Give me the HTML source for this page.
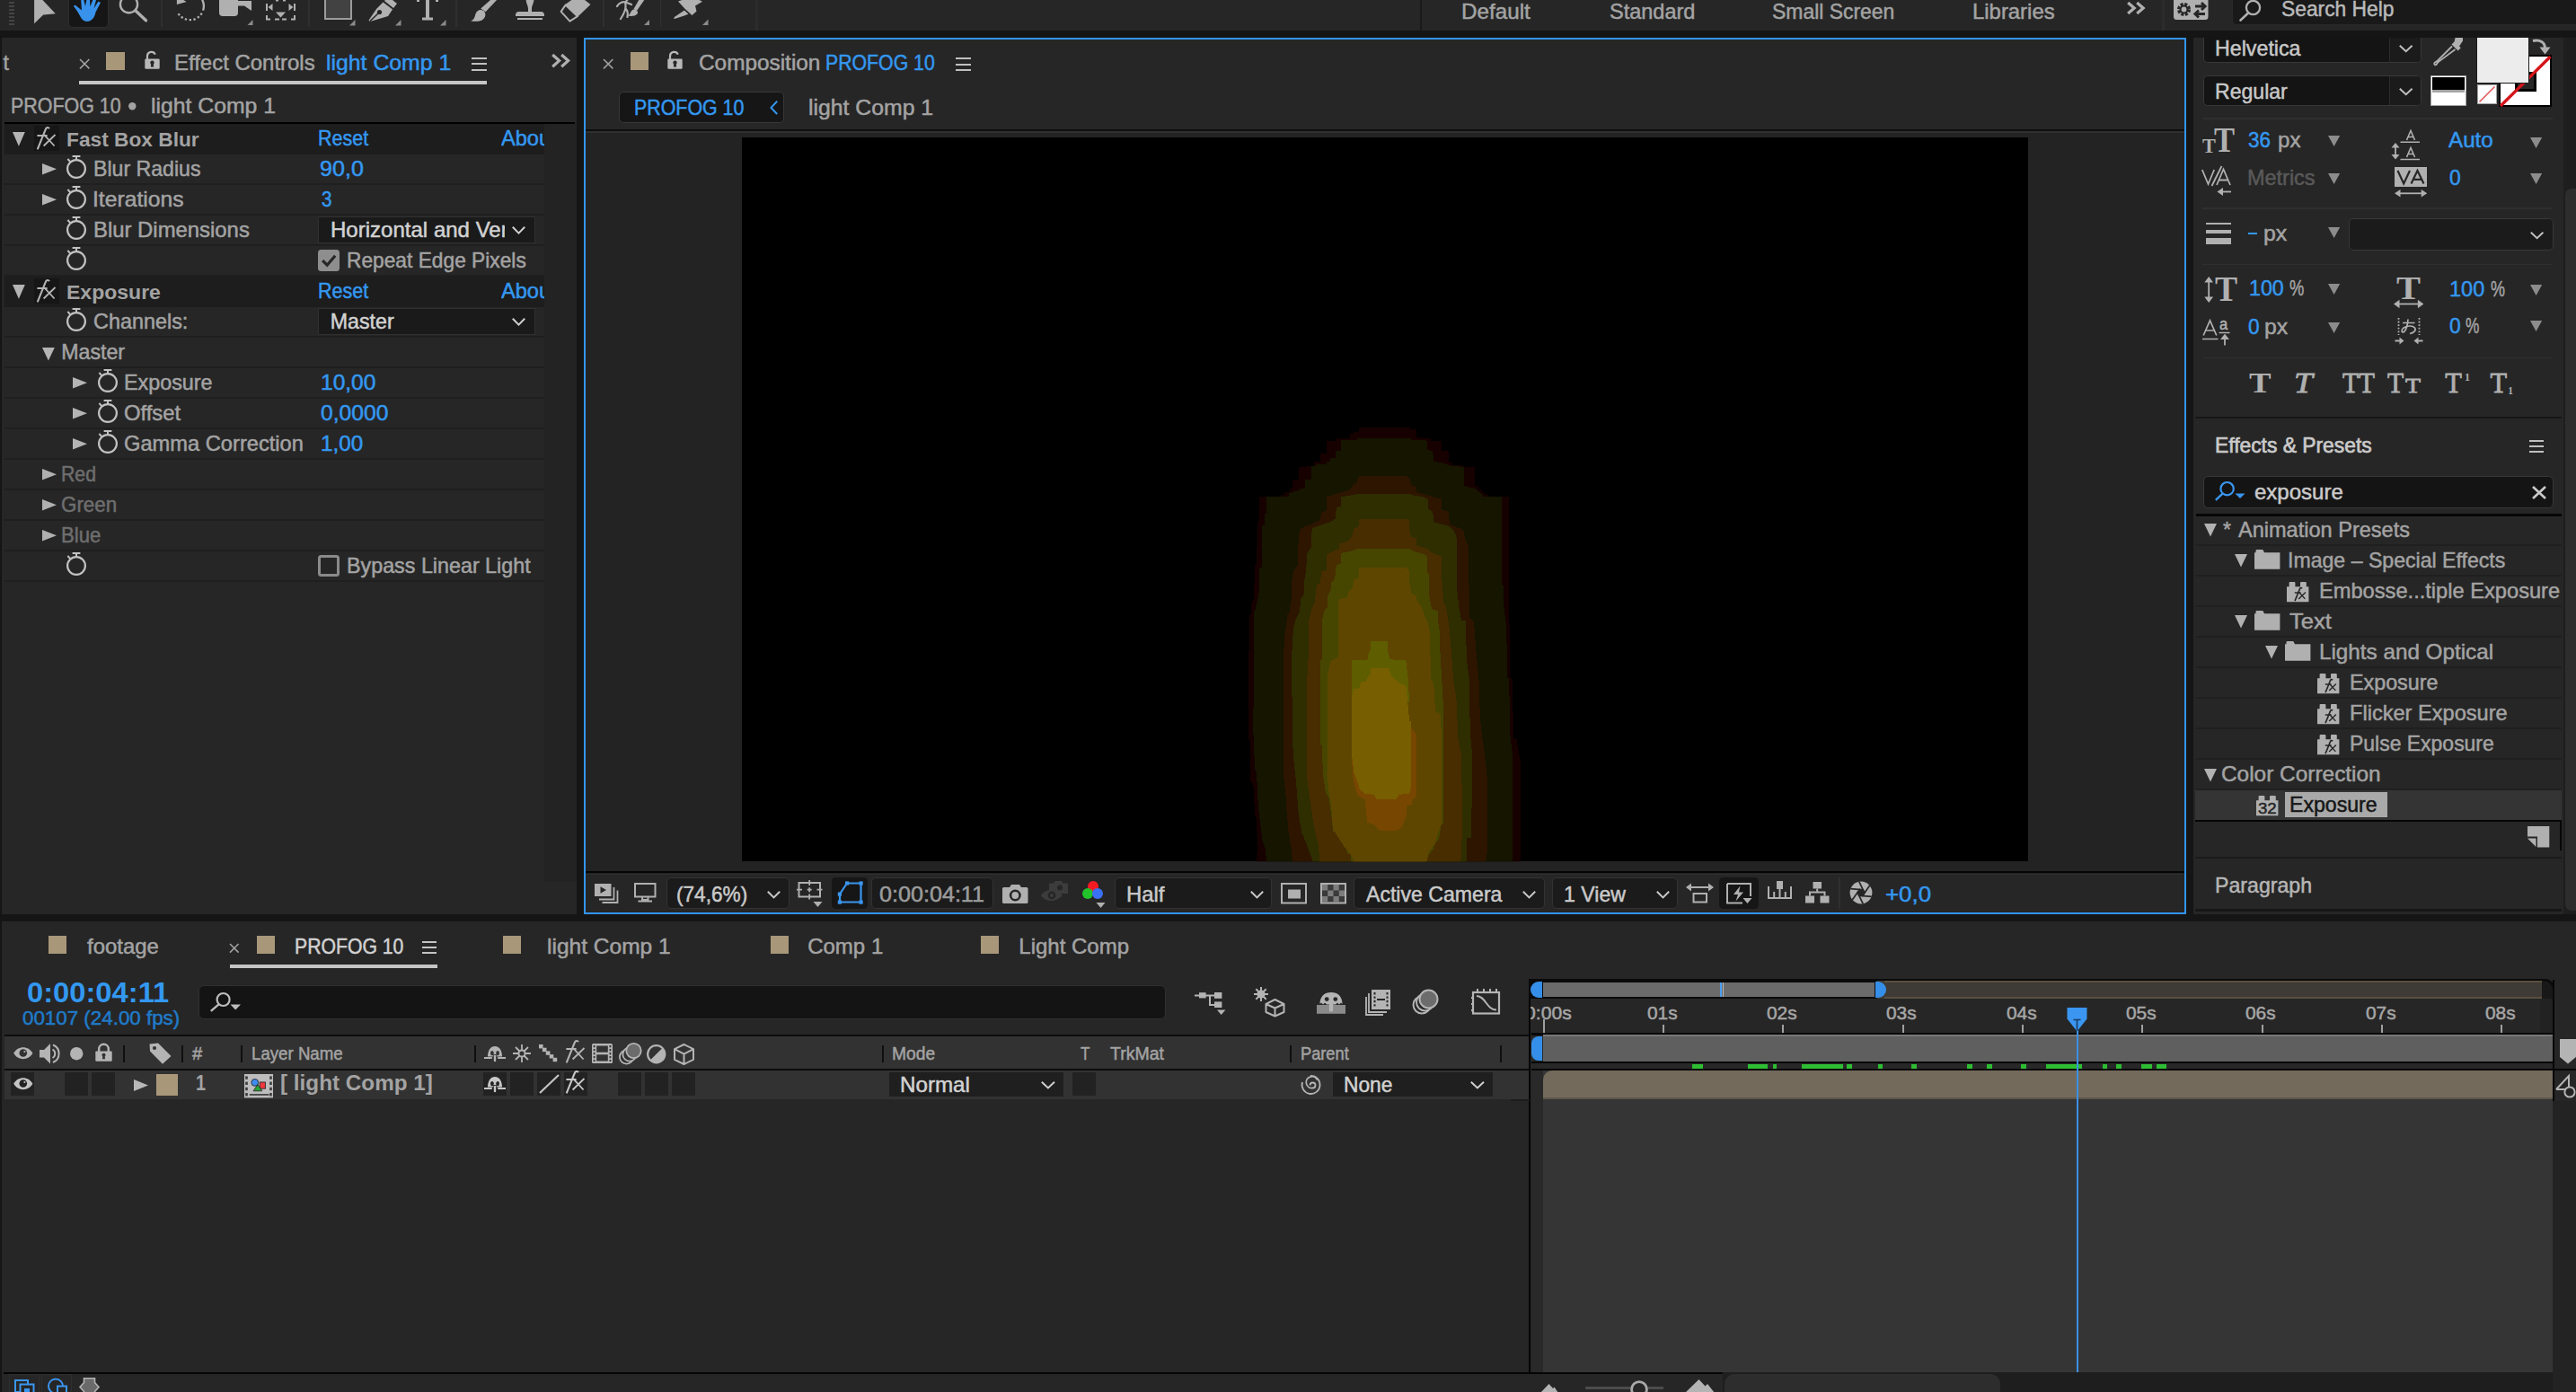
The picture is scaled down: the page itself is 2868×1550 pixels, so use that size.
<!DOCTYPE html>
<html><head><meta charset="utf-8"><title>After Effects</title>
<style>
html,body{margin:0;padding:0;background:#151515;}
body{width:2868px;height:1550px;position:relative;overflow:hidden;font-family:"Liberation Sans", sans-serif;}
div,svg,span.t{position:absolute;}
span.t{white-space:pre;transform-origin:0 0;}
div.c{overflow:hidden;}
svg{overflow:visible;}
</style></head><body>
<div style="left:0.00px;top:0.00px;width:2868.00px;height:34.00px;background:#262626;"></div>
<div style="left:10.00px;top:2.00px;width:6.00px;height:2.00px;background:#444444;"></div>
<div style="left:10.00px;top:6.00px;width:6.00px;height:2.00px;background:#444444;"></div>
<div style="left:10.00px;top:10.00px;width:6.00px;height:2.00px;background:#444444;"></div>
<div style="left:10.00px;top:14.00px;width:6.00px;height:2.00px;background:#444444;"></div>
<div style="left:10.00px;top:18.00px;width:6.00px;height:2.00px;background:#444444;"></div>
<div style="left:10.00px;top:22.00px;width:6.00px;height:2.00px;background:#444444;"></div>
<div style="left:10.00px;top:26.00px;width:6.00px;height:2.00px;background:#444444;"></div>
<svg style="left:37.00px;top:0.00px" width="26" height="27" viewBox="0 0 26 27"><path d="M1.1 -1V26.2L11.2 16.4L24.8 15.2L9.5 -1Z" fill="#b0b0b0"/></svg>
<div style="left:75.50px;top:-6.00px;width:45.00px;height:36.50px;background:#161616;border-radius:5px;border:1px solid #2e2e2e;box-sizing:border-box;"></div>
<svg style="left:81.00px;top:0.00px" width="33" height="25" viewBox="0 0 33 25"><path d="M1.5 7.5C0.5 6.5 1.8 5 3.2 6L10 11.5L9.2 0H12.3L14 7L15.3 0H19L19.4 7.2L22.3 0H26L23.5 9.5L28.5 1.5L31 3L25.5 13.5C24.5 18.5 22.5 22.5 17.5 23.8C13 24.6 10.3 22 8.5 18.5C6.5 14.5 3.5 10 1.5 7.5Z" fill="#3892ec"/></svg>
<svg style="left:130.00px;top:0.00px" width="36" height="26" viewBox="0 0 36 26"><circle cx="13.5" cy="4.7" r="9.6" fill="none" stroke="#b0b0b0" stroke-width="2.4"/><path d="M20.8 11.8L32.5 22.8" stroke="#b0b0b0" stroke-width="3.4" stroke-linecap="round"/></svg>
<div style="left:179.30px;top:0.00px;width:1.50px;height:30.00px;background:#2f2f2f;"></div>
<svg style="left:196.00px;top:0.00px" width="34" height="26" viewBox="0 0 34 26"><path d="M22.7 -6.8A15.4 15.4 0 0 1 30.1 11.6" fill="none" stroke="#b0b0b0" stroke-width="2.3"/><rect x="27.0" y="14.5" width="2.3" height="2.3" fill="#b0b0b0" transform="rotate(35 28.1 15.6)"/><rect x="23.6" y="17.9" width="2.3" height="2.3" fill="#b0b0b0" transform="rotate(53 24.8 19.1)"/><rect x="19.4" y="20.2" width="2.3" height="2.3" fill="#b0b0b0" transform="rotate(71 20.5 21.4)"/><rect x="14.6" y="21.0" width="2.3" height="2.3" fill="#b0b0b0" transform="rotate(89 15.8 22.2)"/><rect x="9.8" y="20.4" width="2.3" height="2.3" fill="#b0b0b0" transform="rotate(107 11.0 21.5)"/><rect x="5.5" y="18.3" width="2.3" height="2.3" fill="#b0b0b0" transform="rotate(125 6.7 19.4)"/><rect x="2.1" y="14.9" width="2.3" height="2.3" fill="#b0b0b0" transform="rotate(143 3.2 16.1)"/><path d="M0.9 -4L11.7 1.9L0.9 5Z" fill="#b0b0b0"/></svg>
<svg style="left:244.00px;top:0.00px" width="38" height="29" viewBox="0 0 38 29"><path d="M0 0H21V14A4 4 0 0 1 17 18H4A4 4 0 0 1 0 14Z" fill="#b0b0b0"/><path d="M21 1H36V12L28 6.5H21Z" fill="#b0b0b0"/><path d="M31.5 28H37.5V22Z" fill="#8a8a8a"/></svg>
<svg style="left:296.00px;top:0.00px" width="33" height="23" viewBox="0 0 33 23"><path d="M1 4V12M32 4V12" stroke="#b0b0b0" stroke-width="2"/><path d="M1 17V21.5H5M10 21.5H15M18 21.5H23M28 21.5H32V17" stroke="#b0b0b0" stroke-width="2" fill="none"/><path d="M11 0H14M19 0H22" stroke="#b0b0b0" stroke-width="3"/><path d="M2.5 8L7.5 4V12ZM30.5 8L25.5 4V12ZM16.5 19.5L11 13.5H22Z" fill="#b0b0b0"/></svg>
<div style="left:343.30px;top:0.00px;width:1.50px;height:30.00px;background:#2f2f2f;"></div>
<div style="left:360.50px;top:-4.00px;width:31.00px;height:25.50px;background:#424242;border:2px solid #9c9c9c;box-sizing:border-box;"></div>
<svg style="left:388.50px;top:21.50px" width="7" height="7" viewBox="0 0 7 7"><path d="M0 6.5H6.5V0Z" fill="#8a8a8a"/></svg>
<svg style="left:410.00px;top:0.00px" width="33" height="25" viewBox="0 0 33 25"><path d="M22 -4L32 4L28 9L18 1Z" fill="#b0b0b0"/><path d="M16.5 2.5L27 10.5L22 18L2 24L0.5 22.5L9.5 9.5Z" fill="#b0b0b0"/><circle cx="12.5" cy="13.5" r="2.6" fill="#262626"/><path d="M11.5 14.5L2 23.5" stroke="#262626" stroke-width="1.6"/></svg>
<svg style="left:439.50px;top:21.50px" width="7" height="7" viewBox="0 0 7 7"><path d="M0 6.5H6.5V0Z" fill="#8a8a8a"/></svg>
<svg style="left:464.00px;top:0.00px" width="26" height="23" viewBox="0 0 26 23"><path d="M0 -4H24V2H21V-1H14V19.5H18V22.5H6V19.5H10V-1H3V2H0Z" fill="#b0b0b0"/></svg>
<svg style="left:489.50px;top:21.50px" width="7" height="7" viewBox="0 0 7 7"><path d="M0 6.5H6.5V0Z" fill="#8a8a8a"/></svg>
<div style="left:507.30px;top:0.00px;width:1.50px;height:30.00px;background:#2f2f2f;"></div>
<svg style="left:523.00px;top:0.00px" width="32" height="25" viewBox="0 0 32 25"><path d="M24.2 -1H31L17.6 13.2L12.2 9.6Z" fill="#b0b0b0"/><path d="M1 23.2C5 22.3 5.4 19 6.5 15.5C8 11.3 12 9.8 15.2 12C18.6 14.6 18 19.6 14 22.2C10 24.4 5 24 1 23.2Z" fill="#b0b0b0"/></svg>
<svg style="left:574.00px;top:0.00px" width="32" height="23" viewBox="0 0 32 23"><path d="M11.5 -2C11.5 4 14 6 14 10V13H3.5C1.5 13 0 14.5 0 16.5V18H32V16.5C32 14.5 30.5 13 28.5 13H18V10C18 6 20.5 4 20.5 -2Z" fill="#b0b0b0"/><rect x="2" y="20" width="28" height="2" fill="#b0b0b0"/></svg>
<svg style="left:623.00px;top:0.00px" width="36" height="25" viewBox="0 0 36 25"><path d="M6.3 5.1L21 -5.6L34.5 5.1L20.4 18.6Z" fill="#b0b0b0"/><path d="M6.6 5.6L20 18.2L11.4 23.6L1.6 12.9Z" fill="none" stroke="#b0b0b0" stroke-width="2" stroke-linejoin="round"/></svg>
<div style="left:671.30px;top:0.00px;width:1.50px;height:30.00px;background:#2f2f2f;"></div>
<svg style="left:685.00px;top:0.00px" width="40" height="29" viewBox="0 0 40 29"><path d="M2 7C4 3 9 1 13 3L18 5M11 3C13 9 10 15 6 21M12 10C14 12 14 16 13.5 19M11.5 2.5C13 0 15 -2 16 -3" stroke="#b0b0b0" stroke-width="2.2" fill="none" stroke-linecap="round"/><path d="M28 -3L33 -1L24 12L20.5 10Z" fill="#b0b0b0"/><path d="M20 10.5C23 10 26.5 13 24.5 15.5C22.5 18 17.5 18.5 14 17.5C17 16 17 12 20 10.5Z" fill="#b0b0b0"/><path d="M32 28H38V22Z" fill="#8a8a8a"/></svg>
<div style="left:734.80px;top:0.00px;width:1.50px;height:30.00px;background:#2f2f2f;"></div>
<svg style="left:749.00px;top:0.00px" width="40" height="29" viewBox="0 0 40 29"><path d="M6 1.5L22 -4L33 1.8L25 6.5L26.5 12.5L21.5 17L13.5 9.8Z" fill="#b0b0b0"/><path d="M13 11.5L17.5 15.8L3.5 20.5L1.2 21L1.8 19Z" fill="#b0b0b0"/><path d="M33 28H39.5V21.5Z" fill="#8a8a8a"/></svg>
<div style="left:840.50px;top:0.00px;width:3.50px;height:34.00px;background:#2c2c2c;"></div>
<div style="left:1581.00px;top:0.00px;width:1.50px;height:34.00px;background:#1a1a1a;"></div>
<span class="t" style="left:1627.01px;top:0.63px;font-size:24.3px;line-height:24.3px;color:#a3a3a3;-webkit-text-stroke:0.5px #a3a3a3;transform:scaleX(0.9969);">Default</span>
<span class="t" style="left:1791.53px;top:0.63px;font-size:24.3px;line-height:24.3px;color:#a3a3a3;-webkit-text-stroke:0.5px #a3a3a3;transform:scaleX(0.9678);">Standard</span>
<span class="t" style="left:1973.06px;top:0.63px;font-size:24.3px;line-height:24.3px;color:#a3a3a3;-webkit-text-stroke:0.5px #a3a3a3;transform:scaleX(0.9438);">Small Screen</span>
<span class="t" style="left:2195.53px;top:0.63px;font-size:24.3px;line-height:24.3px;color:#a3a3a3;-webkit-text-stroke:0.5px #a3a3a3;transform:scaleX(0.9832);">Libraries</span>
<svg style="left:2368.00px;top:1.50px" width="21" height="14" viewBox="0 0 21 14"><path d="M1.2 1L8.2 7L1.2 13M11.2 1L18.2 7L11.2 13" fill="none" stroke="#b0b0b0" stroke-width="3.2"/></svg>
<div style="left:2406.50px;top:0.00px;width:3.50px;height:34.00px;background:#2c2c2c;"></div>
<svg style="left:2419.80px;top:0.00px" width="39" height="22.5" viewBox="0 0 39 22.5"><path d="M0 0H38.5V18.5A3.5 3.5 0 0 1 35 22H3.5A3.5 3.5 0 0 1 0 18.5Z" fill="#b0b0b0"/><circle cx="11.5" cy="10.5" r="5.6" fill="none" stroke="#262626" stroke-width="3.8" stroke-dasharray="2.9 1.5"/><circle cx="11.5" cy="10.5" r="4" fill="none" stroke="#262626" stroke-width="2.2"/><path d="M24 7H35M31 3L35.2 7L31 11M35 15.5H24M28 11.5L23.8 15.5L28 19.5" fill="none" stroke="#262626" stroke-width="2.8"/></svg>
<div style="left:2484.50px;top:-6.00px;width:400.00px;height:33.50px;background:#191919;border-radius:5px;border:1px solid #2a2a2a;box-sizing:border-box;"></div>
<svg style="left:2493.00px;top:0.00px" width="26" height="24" viewBox="0 0 26 24"><circle cx="15.5" cy="8.5" r="7.6" fill="none" stroke="#b0b0b0" stroke-width="2.3"/><path d="M10 14.5L1.5 22.5" stroke="#b0b0b0" stroke-width="2.6" stroke-linecap="round"/></svg>
<span class="t" style="left:2540.06px;top:-1.77px;font-size:24.3px;line-height:24.3px;color:#b9b9b9;-webkit-text-stroke:0.5px #b9b9b9;transform:scaleX(0.9380);">Search Help</span>
<div style="left:2.00px;top:42.00px;width:640.00px;height:976.00px;background:#262626;"></div>
<span class="t" style="left:3.60px;top:58.96px;font-size:23.2px;line-height:23.2px;color:#a3a3a3;-webkit-text-stroke:0.5px #a3a3a3;">t</span>
<svg style="left:88.80px;top:65.80px" width="10.4" height="10.4" viewBox="0 0 10.4 10.4"><path d="M0 0L10.4 10.4M10.4 0L0 10.4" stroke="#a0a0a0" stroke-width="1.6"/></svg>
<div style="left:118.00px;top:58.00px;width:21.00px;height:20.00px;background:#a9977a;"></div>
<svg style="left:160.50px;top:55.50px" width="18" height="21" viewBox="0 0 18 21"><path d="M3 10V6.2A4.6 4.6 0 0 1 11.8 4.6" fill="none" stroke="#b8b8b8" stroke-width="2.2"/><rect x="0.3" y="9.5" width="16.4" height="11.2" rx="1.2" fill="#b8b8b8"/><circle cx="8.5" cy="13.8" r="2.2" fill="#262626"/><path d="M7.4 14.5h2.2l0.6 4h-3.4z" fill="#262626"/></svg>
<span class="t" style="left:194.47px;top:58.86px;font-size:23.2px;line-height:23.2px;color:#a3a3a3;-webkit-text-stroke:0.5px #a3a3a3;transform:scaleX(1.0330);">Effect Controls</span>
<span class="t" style="left:363.23px;top:58.86px;font-size:23.2px;line-height:23.2px;color:#3498f1;-webkit-text-stroke:0.5px #3498f1;transform:scaleX(1.0696);">light Comp 1</span>
<div style="left:525.00px;top:64.20px;width:16.50px;height:2.00px;background:#c0c0c0;"></div>
<div style="left:525.00px;top:70.45px;width:16.50px;height:2.00px;background:#c0c0c0;"></div>
<div style="left:525.00px;top:76.70px;width:16.50px;height:2.00px;background:#c0c0c0;"></div>
<svg style="left:614.00px;top:60.40px" width="21" height="16" viewBox="0 0 21 16"><path d="M1.2 1L8.6 7.6L1.2 14.2M11.2 1L18.6 7.6L11.2 14.2" fill="none" stroke="#b0b0b0" stroke-width="3.2"/></svg>
<div style="left:88.00px;top:90.00px;width:454.30px;height:4.20px;background:#c6c6c6;"></div>
<span class="t" style="left:12.08px;top:106.76px;font-size:23.2px;line-height:23.2px;color:#a3a3a3;-webkit-text-stroke:0.5px #a3a3a3;transform:scaleX(0.9242);">PROFOG 10</span>
<svg style="left:143.40px;top:113.60px" width="8.6" height="8.6" viewBox="0 0 8.6 8.6"><circle cx="4.3" cy="4.3" r="4.2" fill="#a3a3a3"/></svg>
<span class="t" style="left:167.53px;top:106.76px;font-size:23.2px;line-height:23.2px;color:#a3a3a3;-webkit-text-stroke:0.5px #a3a3a3;transform:scaleX(1.0673);">light Comp 1</span>
<div style="left:5.00px;top:135.50px;width:635.00px;height:2.20px;background:#000;"></div>
<div style="left:5.00px;top:138.00px;width:601.00px;height:34.01px;background:#1d1d1d;"></div>
<div style="left:5.00px;top:203.82px;width:601.00px;height:2.20px;background:#1f1f1f;"></div>
<div style="left:5.00px;top:237.83px;width:601.00px;height:2.20px;background:#1f1f1f;"></div>
<div style="left:5.00px;top:271.84px;width:601.00px;height:2.20px;background:#1f1f1f;"></div>
<div style="left:5.00px;top:305.85px;width:601.00px;height:2.20px;background:#1f1f1f;"></div>
<div style="left:5.00px;top:308.05px;width:601.00px;height:34.01px;background:#1d1d1d;"></div>
<div style="left:5.00px;top:373.87px;width:601.00px;height:2.20px;background:#1f1f1f;"></div>
<div style="left:5.00px;top:407.88px;width:601.00px;height:2.20px;background:#1f1f1f;"></div>
<div style="left:5.00px;top:441.89px;width:601.00px;height:2.20px;background:#1f1f1f;"></div>
<div style="left:5.00px;top:475.90px;width:601.00px;height:2.20px;background:#1f1f1f;"></div>
<div style="left:5.00px;top:509.91px;width:601.00px;height:2.20px;background:#1f1f1f;"></div>
<div style="left:5.00px;top:543.92px;width:601.00px;height:2.20px;background:#1f1f1f;"></div>
<div style="left:5.00px;top:577.93px;width:601.00px;height:2.20px;background:#1f1f1f;"></div>
<div style="left:5.00px;top:611.94px;width:601.00px;height:2.20px;background:#1f1f1f;"></div>
<div style="left:5.00px;top:645.95px;width:601.00px;height:2.20px;background:#1f1f1f;"></div>
<div style="left:5.00px;top:645.95px;width:601.00px;height:2.20px;background:#1f1f1f;"></div>
<div style="left:606.00px;top:138.00px;width:36.00px;height:844.00px;background:#232323;"></div>
<svg style="left:13.60px;top:147.00px" width="13.8" height="15.8" viewBox="0 0 13.8 15.8"><path d="M0 0H13.8L6.9 15.8Z" fill="#b4b4b4"/></svg>
<div style="left:38.00px;top:140.20px;width:28.00px;height:27.40px;background:#161616;"></div>
<svg style="left:40.00px;top:140.70px" width="24.0" height="26.0" viewBox="0 0 24 26"><path d="M15 2.2C13.8 0.5 11.6 0.5 10.7 3.2L1.7 25.3M1.4 10H12.6" fill="none" stroke="#b4b4b4" stroke-width="2.1"/><path d="M9.4 9.3L20.6 21.5M21.5 9L8.6 21.5" fill="none" stroke="#b4b4b4" stroke-width="1.81"/></svg>
<span class="t" style="left:74.00px;top:143.60px;font-size:22.8px;line-height:22.8px;color:#a3a3a3;font-weight:bold;transform:scaleX(0.9964);">Fast Box Blur</span>
<span class="t" style="left:354.27px;top:143.26px;font-size:23.2px;line-height:23.2px;color:#3498f1;-webkit-text-stroke:0.5px #3498f1;transform:scaleX(0.9280);">Reset</span>
<div class="c" style="left:557.80px;top:139.26px;width:48.20px;height:31.2px"><span class="t" style="left:0;top:4px;font-size:23.2px;line-height:23.2px;color:#3498f1;-webkit-text-stroke:0.5px #3498f1;transform:scaleX(1.0171);">About</span></div>
<svg style="left:13.60px;top:317.05px" width="13.8" height="15.8" viewBox="0 0 13.8 15.8"><path d="M0 0H13.8L6.9 15.8Z" fill="#b4b4b4"/></svg>
<div style="left:38.00px;top:310.25px;width:28.00px;height:27.40px;background:#161616;"></div>
<svg style="left:40.00px;top:310.75px" width="24.0" height="26.0" viewBox="0 0 24 26"><path d="M15 2.2C13.8 0.5 11.6 0.5 10.7 3.2L1.7 25.3M1.4 10H12.6" fill="none" stroke="#b4b4b4" stroke-width="2.1"/><path d="M9.4 9.3L20.6 21.5M21.5 9L8.6 21.5" fill="none" stroke="#b4b4b4" stroke-width="1.81"/></svg>
<span class="t" style="left:73.99px;top:313.65px;font-size:22.8px;line-height:22.8px;color:#a3a3a3;font-weight:bold;transform:scaleX(1.0097);">Exposure</span>
<span class="t" style="left:354.27px;top:313.31px;font-size:23.2px;line-height:23.2px;color:#3498f1;-webkit-text-stroke:0.5px #3498f1;transform:scaleX(0.9280);">Reset</span>
<div class="c" style="left:557.80px;top:309.31px;width:48.20px;height:31.2px"><span class="t" style="left:0;top:4px;font-size:23.2px;line-height:23.2px;color:#3498f1;-webkit-text-stroke:0.5px #3498f1;transform:scaleX(1.0171);">About</span></div>
<svg style="left:46.70px;top:181.91px" width="16" height="12.6" viewBox="0 0 16 12.6"><path d="M0 0L16 6.3L0 12.6Z" fill="#b4b4b4"/></svg>
<svg style="left:72.00px;top:172.21px" width="26" height="28" viewBox="0 0 26 28"><circle cx="13" cy="16" r="9.9" fill="none" stroke="#c2c2c2" stroke-width="2.2"/><path d="M8.6 2.1H17.4M13 2.1V6.2M3.4 5L6.4 8.4" stroke="#c2c2c2" stroke-width="2" fill="none"/></svg>
<span class="t" style="left:103.80px;top:177.27px;font-size:23.2px;line-height:23.2px;color:#a3a3a3;-webkit-text-stroke:0.5px #a3a3a3;transform:scaleX(0.9969);">Blur Radius</span>
<span class="t" style="left:355.72px;top:177.27px;font-size:23.2px;line-height:23.2px;color:#3498f1;-webkit-text-stroke:0.5px #3498f1;transform:scaleX(1.0825);">90,0</span>
<svg style="left:46.70px;top:215.92px" width="16" height="12.6" viewBox="0 0 16 12.6"><path d="M0 0L16 6.3L0 12.6Z" fill="#b4b4b4"/></svg>
<svg style="left:72.00px;top:206.22px" width="26" height="28" viewBox="0 0 26 28"><circle cx="13" cy="16" r="9.9" fill="none" stroke="#c2c2c2" stroke-width="2.2"/><path d="M8.6 2.1H17.4M13 2.1V6.2M3.4 5L6.4 8.4" stroke="#c2c2c2" stroke-width="2" fill="none"/></svg>
<span class="t" style="left:102.67px;top:211.28px;font-size:23.2px;line-height:23.2px;color:#a3a3a3;-webkit-text-stroke:0.5px #a3a3a3;transform:scaleX(1.0649);">Iterations</span>
<span class="t" style="left:357.50px;top:211.28px;font-size:23.2px;line-height:23.2px;color:#3498f1;-webkit-text-stroke:0.5px #3498f1;transform:scaleX(0.8917);">3</span>
<svg style="left:72.00px;top:240.23px" width="26" height="28" viewBox="0 0 26 28"><circle cx="13" cy="16" r="9.9" fill="none" stroke="#c2c2c2" stroke-width="2.2"/><path d="M8.6 2.1H17.4M13 2.1V6.2M3.4 5L6.4 8.4" stroke="#c2c2c2" stroke-width="2" fill="none"/></svg>
<span class="t" style="left:103.77px;top:245.29px;font-size:23.2px;line-height:23.2px;color:#a3a3a3;-webkit-text-stroke:0.5px #a3a3a3;transform:scaleX(1.0298);">Blur Dimensions</span>
<svg style="left:72.00px;top:274.24px" width="26" height="28" viewBox="0 0 26 28"><circle cx="13" cy="16" r="9.9" fill="none" stroke="#c2c2c2" stroke-width="2.2"/><path d="M8.6 2.1H17.4M13 2.1V6.2M3.4 5L6.4 8.4" stroke="#c2c2c2" stroke-width="2" fill="none"/></svg>
<svg style="left:72.00px;top:342.26px" width="26" height="28" viewBox="0 0 26 28"><circle cx="13" cy="16" r="9.9" fill="none" stroke="#c2c2c2" stroke-width="2.2"/><path d="M8.6 2.1H17.4M13 2.1V6.2M3.4 5L6.4 8.4" stroke="#c2c2c2" stroke-width="2" fill="none"/></svg>
<span class="t" style="left:103.79px;top:347.32px;font-size:23.2px;line-height:23.2px;color:#a3a3a3;-webkit-text-stroke:0.5px #a3a3a3;transform:scaleX(1.0091);">Channels:</span>
<svg style="left:47.40px;top:386.57px" width="13.8" height="14.5" viewBox="0 0 13.8 14.5"><path d="M0 0H13.8L6.9 14.5Z" fill="#b4b4b4"/></svg>
<span class="t" style="left:68.20px;top:381.33px;font-size:23.2px;line-height:23.2px;color:#a3a3a3;-webkit-text-stroke:0.5px #a3a3a3;">Master</span>
<svg style="left:81.20px;top:419.98px" width="16" height="12.6" viewBox="0 0 16 12.6"><path d="M0 0L16 6.3L0 12.6Z" fill="#b4b4b4"/></svg>
<svg style="left:106.50px;top:410.28px" width="26" height="28" viewBox="0 0 26 28"><circle cx="13" cy="16" r="9.9" fill="none" stroke="#c2c2c2" stroke-width="2.2"/><path d="M8.6 2.1H17.4M13 2.1V6.2M3.4 5L6.4 8.4" stroke="#c2c2c2" stroke-width="2" fill="none"/></svg>
<span class="t" style="left:138.29px;top:415.34px;font-size:23.2px;line-height:23.2px;color:#a3a3a3;-webkit-text-stroke:0.5px #a3a3a3;transform:scaleX(1.0066);">Exposure</span>
<span class="t" style="left:357.14px;top:415.34px;font-size:23.2px;line-height:23.2px;color:#3498f1;-webkit-text-stroke:0.5px #3498f1;transform:scaleX(1.0583);">10,00</span>
<svg style="left:81.20px;top:453.99px" width="16" height="12.6" viewBox="0 0 16 12.6"><path d="M0 0L16 6.3L0 12.6Z" fill="#b4b4b4"/></svg>
<svg style="left:106.50px;top:444.29px" width="26" height="28" viewBox="0 0 26 28"><circle cx="13" cy="16" r="9.9" fill="none" stroke="#c2c2c2" stroke-width="2.2"/><path d="M8.6 2.1H17.4M13 2.1V6.2M3.4 5L6.4 8.4" stroke="#c2c2c2" stroke-width="2" fill="none"/></svg>
<span class="t" style="left:138.27px;top:449.35px;font-size:23.2px;line-height:23.2px;color:#a3a3a3;-webkit-text-stroke:0.5px #a3a3a3;transform:scaleX(1.0280);">Offset</span>
<span class="t" style="left:357.00px;top:449.35px;font-size:23.2px;line-height:23.2px;color:#3498f1;-webkit-text-stroke:0.5px #3498f1;transform:scaleX(1.0639);">0,0000</span>
<svg style="left:81.20px;top:488.00px" width="16" height="12.6" viewBox="0 0 16 12.6"><path d="M0 0L16 6.3L0 12.6Z" fill="#b4b4b4"/></svg>
<svg style="left:106.50px;top:478.30px" width="26" height="28" viewBox="0 0 26 28"><circle cx="13" cy="16" r="9.9" fill="none" stroke="#c2c2c2" stroke-width="2.2"/><path d="M8.6 2.1H17.4M13 2.1V6.2M3.4 5L6.4 8.4" stroke="#c2c2c2" stroke-width="2" fill="none"/></svg>
<span class="t" style="left:138.28px;top:483.36px;font-size:23.2px;line-height:23.2px;color:#a3a3a3;-webkit-text-stroke:0.5px #a3a3a3;transform:scaleX(1.0208);">Gamma Correction</span>
<span class="t" style="left:357.15px;top:483.36px;font-size:23.2px;line-height:23.2px;color:#3498f1;-webkit-text-stroke:0.5px #3498f1;transform:scaleX(1.0455);">1,00</span>
<svg style="left:46.70px;top:522.01px" width="16" height="12.6" viewBox="0 0 16 12.6"><path d="M0 0L16 6.3L0 12.6Z" fill="#b0b0b0"/></svg>
<span class="t" style="left:68.28px;top:517.37px;font-size:23.2px;line-height:23.2px;color:#6e6e6e;-webkit-text-stroke:0.5px #6e6e6e;transform:scaleX(0.9178);">Red</span>
<svg style="left:46.70px;top:556.02px" width="16" height="12.6" viewBox="0 0 16 12.6"><path d="M0 0L16 6.3L0 12.6Z" fill="#b0b0b0"/></svg>
<span class="t" style="left:68.23px;top:551.38px;font-size:23.2px;line-height:23.2px;color:#6e6e6e;-webkit-text-stroke:0.5px #6e6e6e;transform:scaleX(0.9656);">Green</span>
<svg style="left:46.70px;top:590.03px" width="16" height="12.6" viewBox="0 0 16 12.6"><path d="M0 0L16 6.3L0 12.6Z" fill="#b0b0b0"/></svg>
<span class="t" style="left:68.25px;top:585.39px;font-size:23.2px;line-height:23.2px;color:#6e6e6e;-webkit-text-stroke:0.5px #6e6e6e;transform:scaleX(0.9548);">Blue</span>
<svg style="left:72.00px;top:614.34px" width="26" height="28" viewBox="0 0 26 28"><circle cx="13" cy="16" r="9.9" fill="none" stroke="#c2c2c2" stroke-width="2.2"/><path d="M8.6 2.1H17.4M13 2.1V6.2M3.4 5L6.4 8.4" stroke="#c2c2c2" stroke-width="2" fill="none"/></svg>
<div style="left:354.30px;top:240.63px;width:241.60px;height:30.40px;background:#1a1a1a;border:1.5px solid #303030;box-sizing:border-box;"></div>
<div class="c" style="left:367.96px;top:241.09px;width:194.54px;height:31.2px"><span class="t" style="left:0;top:4px;font-size:23.2px;line-height:23.2px;color:#d2d2d2;-webkit-text-stroke:0.5px #d2d2d2;transform:scaleX(1.0366);">Horizontal and Ver</span></div>
<svg style="left:569.50px;top:251.63px" width="15" height="9.6" viewBox="0 0 15 9.6"><path d="M0.8 0.8L7.5 7.6L14.2 0.8" fill="none" stroke="#d0d0d0" stroke-width="2"/></svg>
<div style="left:354.30px;top:342.66px;width:241.60px;height:30.40px;background:#1a1a1a;border:1.5px solid #303030;box-sizing:border-box;"></div>
<span class="t" style="left:367.80px;top:347.12px;font-size:23.2px;line-height:23.2px;color:#d2d2d2;-webkit-text-stroke:0.5px #d2d2d2;">Master</span>
<svg style="left:569.50px;top:353.66px" width="15" height="9.6" viewBox="0 0 15 9.6"><path d="M0.8 0.8L7.5 7.6L14.2 0.8" fill="none" stroke="#d0d0d0" stroke-width="2"/></svg>
<div style="left:354.00px;top:277.84px;width:24.20px;height:24.20px;background:#8e8e8e;border-radius:3.5px;"></div>
<svg style="left:354.00px;top:277.84px" width="24.2" height="24.2" viewBox="0 0 24.2 24.2"><path d="M5.2 12.2L10.2 17.2L19.2 6.8" fill="none" stroke="#262626" stroke-width="3.2"/></svg>
<span class="t" style="left:385.82px;top:279.00px;font-size:23.2px;line-height:23.2px;color:#a3a3a3;-webkit-text-stroke:0.5px #a3a3a3;transform:scaleX(0.9809);">Repeat Edge Pixels</span>
<div style="left:354.00px;top:617.94px;width:24.20px;height:24.20px;background:transparent;border-radius:3.5px;border:3px solid #8a8a8a;box-sizing:border-box;"></div>
<span class="t" style="left:385.80px;top:619.10px;font-size:23.2px;line-height:23.2px;color:#a3a3a3;-webkit-text-stroke:0.5px #a3a3a3;transform:scaleX(1.0048);">Bypass Linear Light</span>
<div style="left:650.00px;top:42.00px;width:1784.40px;height:975.50px;background:#232323;border:2.2px solid #3395f4;box-sizing:border-box;"></div>
<div style="left:652.20px;top:44.20px;width:1780.00px;height:100.00px;background:#262626;"></div>
<svg style="left:671.80px;top:65.80px" width="10.4" height="10.4" viewBox="0 0 10.4 10.4"><path d="M0 0L10.4 10.4M10.4 0L0 10.4" stroke="#a0a0a0" stroke-width="1.6"/></svg>
<div style="left:701.60px;top:58.00px;width:20.60px;height:19.80px;background:#a9977a;"></div>
<svg style="left:743.30px;top:55.50px" width="18" height="21" viewBox="0 0 18 21"><path d="M3 10V6.2A4.6 4.6 0 0 1 11.8 4.6" fill="none" stroke="#b8b8b8" stroke-width="2.2"/><rect x="0.3" y="9.5" width="16.4" height="11.2" rx="1.2" fill="#b8b8b8"/><circle cx="8.5" cy="13.8" r="2.2" fill="#262626"/><path d="M7.4 14.5h2.2l0.6 4h-3.4z" fill="#262626"/></svg>
<span class="t" style="left:778.14px;top:59.33px;font-size:23px;line-height:23px;color:#a3a3a3;-webkit-text-stroke:0.5px #a3a3a3;transform:scaleX(1.0591);">Composition</span>
<span class="t" style="left:918.68px;top:59.33px;font-size:23px;line-height:23px;color:#3498f1;-webkit-text-stroke:0.5px #3498f1;transform:scaleX(0.9249);">PROFOG 10</span>
<div style="left:1064.00px;top:64.40px;width:16.50px;height:2.00px;background:#c0c0c0;"></div>
<div style="left:1064.00px;top:70.65px;width:16.50px;height:2.00px;background:#c0c0c0;"></div>
<div style="left:1064.00px;top:76.90px;width:16.50px;height:2.00px;background:#c0c0c0;"></div>
<div style="left:688.70px;top:102.40px;width:184.80px;height:35.00px;background:#161616;border-radius:5px;border:1.4px solid #383838;box-sizing:border-box;"></div>
<span class="t" style="left:706.37px;top:109.33px;font-size:23px;line-height:23px;color:#3498f1;-webkit-text-stroke:0.5px #3498f1;transform:scaleX(0.9295);">PROFOG 10</span>
<svg style="left:857.00px;top:112.00px" width="10" height="16" viewBox="0 0 10 16"><path d="M8.2 0.8L1.5 7.9L8.2 15" fill="none" stroke="#3498f1" stroke-width="2"/></svg>
<span class="t" style="left:899.52px;top:109.33px;font-size:23px;line-height:23px;color:#a3a3a3;-webkit-text-stroke:0.5px #a3a3a3;transform:scaleX(1.0776);">light Comp 1</span>
<div style="left:652.20px;top:143.60px;width:1780.00px;height:2.40px;background:#0e0e0e;"></div>
<div style="left:652.20px;top:146.00px;width:1780.00px;height:1.60px;background:#303030;"></div>
<div style="left:825.60px;top:153.20px;width:1432.80px;height:806.20px;background:#000;"></div>
<svg style="left:825.60px;top:153.20px" width="1432.8" height="806.2" viewBox="0 0 1432.8 806.2"><clipPath id="fc"><rect x="0" y="0" width="1432.8" height="806.2"/></clipPath><g clip-path="url(#fc)" shape-rendering="crispEdges"><polygon points="744.0,323.2 744.0,325.5 750.9,325.5 750.9,334.4 767.4,334.8 767.4,337.6 779.5,337.6 779.5,348.8 787.4,348.8 787.4,361.9 790.7,361.9 790.7,364.7 802.9,364.7 802.9,367.0 816.3,367.0 816.3,388.1 819.7,388.1 819.7,391.8 824.3,391.8 824.3,395.5 827.1,395.5 827.1,398.3 830.9,398.3 830.9,400.2 854.2,400.2 854.2,493.6 854.2,538.4 855.2,548.7 855.2,601.0 858.0,602.9 858.9,668.3 862.6,670.1 865.4,687.0 867.3,696.3 867.3,806.5 867.3,812.1 573.1,812.1 573.1,806.5 574.0,787.8 573.1,759.8 571.2,754.2 569.3,720.6 566.5,716.9 565.6,672.0 563.7,670.1 564.7,548.7 564.7,532.8 566.5,531.0 567.5,518.8 570.3,512.3 570.8,476.8 573.1,474.9 574.0,432.0 576.4,418.9 576.4,400.2 600.2,400.2 600.2,398.3 603.9,398.3 603.9,394.6 609.5,394.6 609.5,390.9 613.2,390.9 613.2,381.5 619.8,381.5 619.8,367.0 628.2,367.0 628.2,365.6 637.5,365.6 637.5,361.0 644.1,361.0 644.1,351.6 651.5,351.6 651.5,337.6 661.8,337.6 661.8,334.8 676.8,334.8 676.8,330.2 681.4,330.2 681.4,328.3 687.4,328.3 687.4,323.2" fill="#160000"/><polygon points="744.9,334.8 744.9,336.7 762.7,337.6 762.7,348.3 769.2,348.8 770.2,361.0 778.6,361.9 789.8,365.6 803.8,367.0 803.8,388.1 815.9,390.9 825.3,398.3 825.3,400.2 846.2,400.2 846.2,497.3 847.7,499.2 848.6,525.4 850.5,539.4 851.4,548.7 851.8,601.0 854.2,602.9 855.2,664.5 858.0,687.0 858.5,806.5 858.5,812.1 584.3,812.1 584.3,806.5 582.4,789.7 579.6,784.1 575.9,754.2 574.0,731.8 573.1,707.5 571.2,703.8 569.3,660.8 570.3,548.7 570.3,527.2 572.1,525.4 573.1,517.9 574.9,512.3 576.4,499.2 576.4,478.7 578.7,478.7 578.7,432.0 582.4,432.0 582.4,418.9 584.3,418.9 584.3,400.2 608.6,400.2 608.6,396.5 620.7,392.7 620.7,390.9 627.3,390.9 627.3,380.6 634.4,380.6 634.4,366.2 639.4,366.2 639.4,363.8 650.6,363.8 650.6,361.0 655.3,361.0 655.3,357.2 661.3,357.2 661.3,348.8 667.4,348.8 667.4,336.7 685.2,336.7 685.2,334.8" fill="#151500"/><polygon points="739.3,376.9 743.5,379.7 744.9,387.1 750.9,389.0 751.5,394.6 763.6,398.3 779.5,403.0 779.5,414.2 787.0,417.0 787.9,431.0 802.9,436.6 805.7,448.8 809.4,455.3 809.4,493.6 810.3,534.7 815.0,539.4 815.6,548.7 817.8,574.9 820.6,604.8 821.9,645.9 824.3,668.3 827.1,687.0 829.9,713.1 830.5,791.6 828.1,806.5 828.1,812.1 613.2,812.1 613.2,806.5 611.4,791.6 608.6,772.9 606.7,754.2 605.8,735.5 603.9,716.9 602.6,707.5 602.6,582.3 604.8,548.7 605.8,545.9 607.6,530.0 609.5,529.1 612.3,510.4 612.3,493.6 614.2,482.4 618.8,476.8 619.8,443.2 621.7,436.6 625.4,433.8 633.8,431.0 638.5,428.2 643.7,426.4 645.0,417.0 651.5,416.1 651.5,400.2 658.1,398.3 662.8,396.5 675.8,392.7 679.6,389.0 681.4,385.3 685.2,385.3 685.2,379.7 687.4,379.7 687.4,376.9" fill="#2d1500"/><polygon points="743.1,396.8 746.8,398.3 758.0,400.2 763.6,403.0 763.6,414.2 769.2,416.1 770.2,428.2 787.0,432.9 792.6,437.6 796.3,446.9 796.3,504.8 799.1,527.2 801.0,537.5 805.7,538.4 805.7,548.7 807.5,586.1 810.0,604.8 810.7,660.8 813.1,687.0 812.2,780.4 807.5,780.4 807.0,806.5 807.0,812.1 635.7,812.1 635.7,806.5 629.1,787.8 623.5,774.8 619.8,754.2 617.0,716.9 614.2,692.6 612.7,664.5 612.3,574.9 613.8,548.7 616.0,538.4 620.7,529.1 622.6,512.3 625.4,510.4 626.3,493.6 628.2,482.4 629.1,463.7 633.8,456.2 634.7,434.8 643.1,432.0 655.3,428.2 660.9,424.5 661.8,412.3 667.4,410.5 667.4,400.2 679.6,398.3 685.2,396.8" fill="#2e2e00"/><polygon points="741.2,424.9 743.5,426.4 743.5,437.6 745.3,445.0 750.9,446.0 751.5,454.4 763.6,458.1 767.4,461.9 778.6,466.5 779.5,493.6 781.4,517.9 784.2,523.5 787.9,547.8 787.9,548.7 790.2,576.7 792.6,608.5 795.4,623.4 797.3,668.3 800.6,685.1 802.5,754.2 801.0,799.0 800.1,806.5 800.1,812.1 643.1,812.1 643.1,806.5 642.2,789.7 640.3,782.2 636.6,765.4 633.8,746.7 631.0,728.1 628.8,709.4 629.1,604.8 631.0,573.0 631.0,548.7 631.0,539.4 633.8,527.2 637.5,517.9 640.3,497.3 644.1,496.4 645.0,483.3 651.5,481.5 651.5,464.7 656.2,461.9 664.6,458.1 664.6,452.5 675.8,448.8 679.6,443.2 681.4,435.7 687.4,432.9 687.4,424.9" fill="#472d00"/><polygon points="744.0,458.1 746.8,460.4 760.8,464.7 763.3,467.5 763.3,484.3 764.6,486.1 765.5,512.3 768.3,525.4 774.8,527.2 775.8,547.8 776.7,548.7 777.6,576.7 780.4,623.4 781.4,649.6 781.4,763.6 778.6,765.4 775.8,782.2 772.0,786.0 769.2,793.4 763.6,800.0 760.8,806.5 760.8,812.1 678.6,812.1 678.6,806.5 677.7,798.1 674.0,797.2 672.1,789.7 666.5,784.1 662.8,774.8 658.1,772.9 656.2,754.2 653.4,735.5 649.7,728.1 646.9,709.4 645.9,677.6 643.7,675.8 643.7,582.3 645.9,580.5 646.3,548.7 646.3,535.6 648.7,526.3 651.5,524.4 652.5,510.4 655.3,504.8 656.2,495.5 659.0,493.6 660.9,486.1 661.8,475.9 667.4,474.9 667.4,462.8 681.4,460.0 685.2,458.1" fill="#464600"/><polygon points="739.3,479.0 743.1,482.4 743.5,497.3 745.3,507.6 750.9,510.4 751.5,516.0 757.1,523.5 759.9,532.8 763.6,540.3 765.5,548.7 767.4,602.9 770.2,608.5 772.0,638.4 777.6,642.1 778.6,658.9 779.5,763.6 773.9,776.6 772.0,786.0 764.6,795.3 762.7,806.5 762.7,812.1 681.4,812.1 681.4,806.5 677.7,798.1 671.2,790.6 664.6,780.4 658.1,771.0 656.2,743.0 653.4,728.1 651.5,709.4 652.5,597.3 655.3,583.3 663.7,578.6 663.7,548.7 664.6,514.2 674.0,512.3 675.8,504.8 679.6,503.0 681.4,492.7 687.4,490.8 687.4,479.0" fill="#5f4600"/><polygon points="699.7,560.9 719.2,560.9 719.2,573.0 721.6,581.4 739.3,582.0 741.8,604.8 743.1,629.0 679.2,629.0 679.2,582.0 696.4,582.0 698.2,573.0 699.7,571.1" fill="#5e5e00"/><polygon points="745.3,657.1 750.6,664.5 750.9,733.7 746.8,737.4 745.9,743.0 740.3,743.9 739.3,757.9 733.7,769.2 728.1,772.0 710.4,772.0 703.8,765.4 696.4,762.6 693.6,737.4 685.2,732.7 682.4,722.5 679.9,709.4 679.2,692.6 685.2,679.5 741.2,660.8" fill="#774600"/><polygon points="699.7,590.8 720.7,590.8 722.5,599.2 728.1,604.8 733.7,608.5 739.3,610.4 740.8,623.4 743.1,649.6 744.9,650.5 745.3,722.5 743.1,730.9 731.9,731.8 728.1,737.4 706.7,737.4 703.8,731.8 693.6,730.9 688.0,726.2 685.2,716.9 681.4,707.5 679.9,692.6 679.2,690.7 679.2,622.5 681.4,614.1 688.0,613.2 688.9,606.6 694.5,605.7 698.2,599.2 699.7,597.3" fill="#775e00"/></g></svg>
<div style="left:652.20px;top:970.10px;width:1780.00px;height:2.40px;background:#050505;"></div>
<div style="left:652.20px;top:972.50px;width:1780.00px;height:42.80px;background:#262626;"></div>
<div style="left:652.20px;top:972.50px;width:1780.00px;height:1.40px;background:#2e2e2e;"></div>
<svg style="left:661.70px;top:983.50px" width="27" height="21.5" viewBox="0 0 27 21.5"><path d="M0 0H18.5V14H0Z" fill="#b0b0b0"/><path d="M6.5 3.2L13 7L6.5 10.8Z" fill="#262626"/><path d="M21.5 4V17.5H5M25.5 7.5V21H8.5" fill="none" stroke="#b0b0b0" stroke-width="1.8"/></svg>
<svg style="left:706.00px;top:982.60px" width="25" height="22" viewBox="0 0 25 22"><rect x="1" y="1" width="22.5" height="14.5" fill="none" stroke="#b0b0b0" stroke-width="2"/><path d="M9 16V19H15.5V16M4.5 20.6H20" fill="none" stroke="#b0b0b0" stroke-width="2"/></svg>
<div style="left:741.50px;top:977.00px;width:137.00px;height:35.00px;background:#1b1b1b;border-radius:5px;border:1.4px solid #333333;box-sizing:border-box;"></div>
<span class="t" style="left:753.36px;top:984.18px;font-size:24px;line-height:24px;color:#cacaca;-webkit-text-stroke:0.5px #cacaca;transform:scaleX(0.9422);">(74,6%)</span>
<svg style="left:853.50px;top:992.00px" width="15" height="9.4" viewBox="0 0 15 9.4"><path d="M0.8 0.8L7.5 7.4L14.2 0.8" fill="none" stroke="#c8c8c8" stroke-width="2"/></svg>
<svg style="left:886.90px;top:980.40px" width="30" height="31" viewBox="0 0 30 31"><rect x="2.5" y="3" width="23.5" height="15.5" fill="none" stroke="#b0b0b0" stroke-width="2"/><path d="M14.2 0V6M14.2 15.5V21.5M0 10.7H6M22.5 10.7H28.5M11.7 10.7H16.7M14.2 8.2V13.2" stroke="#b0b0b0" stroke-width="1.8"/><path d="M18.5 24H28.5L23.5 30Z" fill="#b0b0b0"/></svg>
<div style="left:925.70px;top:977.00px;width:40.40px;height:35.00px;background:#161616;border-radius:4.5px;"></div>
<svg style="left:932.00px;top:981.00px" width="30" height="26" viewBox="0 0 30 26"><path d="M3 23.5V14.5L11 2.5H26.5V23.5Z" fill="none" stroke="#3a96f0" stroke-width="2.2"/><g fill="#3a96f0"><rect x="0.8" y="21.5" width="4.2" height="4.2"/><rect x="24.5" y="21.5" width="4.2" height="4.2"/><rect x="24.5" y="0.4" width="4.2" height="4.2"/><rect x="9" y="0.4" width="4.2" height="4.2"/><rect x="0.8" y="12.5" width="4.2" height="4.2"/></g></svg>
<div style="left:969.80px;top:977.00px;width:136.70px;height:35.00px;background:#1b1b1b;border-radius:5px;border:1.4px solid #333333;box-sizing:border-box;"></div>
<span class="t" style="left:979.30px;top:984.18px;font-size:24px;line-height:24px;color:#9c9c9c;-webkit-text-stroke:0.5px #9c9c9c;transform:scaleX(1.0475);">0:00:04:11</span>
<svg style="left:1116.00px;top:984.80px" width="29" height="21.5" viewBox="0 0 29 21.5"><path d="M0 4.5A1.5 1.5 0 0 1 1.5 3H8L10 0H19L21 3H27A1.5 1.5 0 0 1 28.5 4.5V19.5A1.5 1.5 0 0 1 27 21H1.5A1.5 1.5 0 0 1 0 19.5Z" fill="#b0b0b0"/><circle cx="14.3" cy="12" r="5.2" fill="none" stroke="#262626" stroke-width="2.6"/></svg>
<svg style="left:1158.50px;top:980.00px" width="30" height="26" viewBox="0 0 30 26"><path d="M9 4.5A1 1 0 0 1 10 3.5H14L15.5 1H23L24.5 3.5H29A1 1 0 0 1 30 4.5V15H9Z" fill="#3c3c3c"/><circle cx="21" cy="8.5" r="3" fill="#262626"/><path d="M0 17C4 10 16 8 24 17C16 26 4 24 0 17Z" fill="#3c3c3c"/><circle cx="12" cy="17" r="4.4" fill="#262626"/><circle cx="12" cy="17" r="2" fill="#3c3c3c"/></svg>
<svg style="left:1204.50px;top:981.00px" width="28" height="30" viewBox="0 0 28 30"><circle cx="12" cy="6" r="6" fill="#f41a24"/><circle cx="6" cy="14" r="6" fill="#22c42c"/><circle cx="17" cy="14" r="6" fill="#3a70f2"/><path d="M15.5 24H25.5L20.5 30Z" fill="#b0b0b0"/></svg>
<div style="left:1241.00px;top:977.00px;width:175.20px;height:35.00px;background:#1b1b1b;border-radius:5px;border:1.4px solid #333333;box-sizing:border-box;"></div>
<span class="t" style="left:1254.01px;top:984.18px;font-size:24px;line-height:24px;color:#cacaca;-webkit-text-stroke:0.5px #cacaca;transform:scaleX(0.9950);">Half</span>
<svg style="left:1391.50px;top:992.00px" width="15" height="9.4" viewBox="0 0 15 9.4"><path d="M0.8 0.8L7.5 7.4L14.2 0.8" fill="none" stroke="#c8c8c8" stroke-width="2"/></svg>
<svg style="left:1425.50px;top:982.60px" width="29" height="23.5" viewBox="0 0 29 23.5"><rect x="1" y="1" width="27" height="21.5" fill="none" stroke="#b0b0b0" stroke-width="2"/><rect x="8" y="7.5" width="14" height="10" fill="#b0b0b0"/></svg>
<svg style="left:1469.90px;top:982.60px" width="29" height="23.5" viewBox="0 0 29 23.5"><rect x="1" y="1" width="27" height="21.5" fill="#3a3a3a" stroke="#b0b0b0" stroke-width="2"/><rect x="2.00" y="2.00" width="6.25" height="6.5" fill="#7c7c7c"/><rect x="14.50" y="2.00" width="6.25" height="6.5" fill="#7c7c7c"/><rect x="8.25" y="8.50" width="6.25" height="6.5" fill="#7c7c7c"/><rect x="20.75" y="8.50" width="6.25" height="6.5" fill="#7c7c7c"/><rect x="2.00" y="15.00" width="6.25" height="6.5" fill="#7c7c7c"/><rect x="14.50" y="15.00" width="6.25" height="6.5" fill="#7c7c7c"/></svg>
<div style="left:1507.10px;top:977.00px;width:213.40px;height:35.00px;background:#1b1b1b;border-radius:5px;border:1.4px solid #333333;box-sizing:border-box;"></div>
<span class="t" style="left:1520.60px;top:984.18px;font-size:24px;line-height:24px;color:#cacaca;-webkit-text-stroke:0.5px #cacaca;transform:scaleX(0.9624);">Active Camera</span>
<svg style="left:1695.00px;top:992.00px" width="15" height="9.4" viewBox="0 0 15 9.4"><path d="M0.8 0.8L7.5 7.4L14.2 0.8" fill="none" stroke="#c8c8c8" stroke-width="2"/></svg>
<div style="left:1727.60px;top:977.00px;width:140.70px;height:35.00px;background:#1b1b1b;border-radius:5px;border:1.4px solid #333333;box-sizing:border-box;"></div>
<span class="t" style="left:1741.04px;top:984.18px;font-size:24px;line-height:24px;color:#cacaca;-webkit-text-stroke:0.5px #cacaca;transform:scaleX(0.9625);">1 View</span>
<svg style="left:1843.50px;top:992.00px" width="15" height="9.4" viewBox="0 0 15 9.4"><path d="M0.8 0.8L7.5 7.4L14.2 0.8" fill="none" stroke="#c8c8c8" stroke-width="2"/></svg>
<svg style="left:1876.70px;top:982.00px" width="32" height="24" viewBox="0 0 32 24"><path d="M1 6H30" stroke="#b0b0b0" stroke-width="2"/><path d="M0 6L6 1.5V10.5ZM31 6L25 1.5V10.5Z" fill="#b0b0b0"/><rect x="8.5" y="13" width="14.5" height="9.5" fill="none" stroke="#b0b0b0" stroke-width="2"/></svg>
<div style="left:1914.00px;top:977.00px;width:44.00px;height:35.00px;background:#161616;border-radius:4.5px;"></div>
<svg style="left:1921.70px;top:982.60px" width="30" height="24" viewBox="0 0 30 24"><path d="M1 1H27V15M18 22.5H1V1" fill="none" stroke="#b0b0b0" stroke-width="2"/><path d="M15.5 3.5L8 13H13L10.5 20.5L19 10.5H14Z" fill="#b0b0b0"/><path d="M18.5 17H28.5L23.5 23Z" fill="#b0b0b0"/></svg>
<svg style="left:1967.70px;top:981.00px" width="27" height="20" viewBox="0 0 27 20"><path d="M1 6V19H26V6" fill="none" stroke="#b0b0b0" stroke-width="2"/><rect x="10" y="0" width="7" height="9" fill="#b0b0b0"/><path d="M7.2 12V19M13.5 9V19M19.8 12V19" stroke="#b0b0b0" stroke-width="2"/></svg>
<svg style="left:2010.20px;top:981.50px" width="27" height="24" viewBox="0 0 27 24"><rect x="8.5" y="0" width="9.5" height="7.5" fill="#b0b0b0"/><rect x="0" y="15.5" width="10" height="8" fill="#b0b0b0"/><rect x="16.5" y="15.5" width="10" height="8" fill="#b0b0b0"/><path d="M13.2 7.5V11.5M5 15.5V11.5H21.5V15.5" fill="none" stroke="#b0b0b0" stroke-width="2"/></svg>
<div style="left:2047.00px;top:977.00px;width:1.50px;height:35.00px;background:#303030;"></div>
<svg style="left:2059.00px;top:981.00px" width="26" height="26" viewBox="0 0 26 26"><circle cx="13" cy="13" r="12.4" fill="#b0b0b0"/><path d="M24.8 17.3L9.9 16.1" stroke="#262626" stroke-width="1.7"/><path d="M15.2 25.4L8.7 11.9" stroke="#262626" stroke-width="1.7"/><path d="M3.3 21.1L11.9 8.7" stroke="#262626" stroke-width="1.7"/><path d="M1.2 8.7L16.1 9.9" stroke="#262626" stroke-width="1.7"/><path d="M10.8 0.6L17.3 14.1" stroke="#262626" stroke-width="1.7"/><path d="M22.7 4.9L14.1 17.3" stroke="#262626" stroke-width="1.7"/><circle cx="13" cy="13" r="3.9" fill="#262626"/></svg>
<span class="t" style="left:2098.54px;top:983.76px;font-size:24.5px;line-height:24.5px;color:#3498f1;-webkit-text-stroke:0.5px #3498f1;transform:scaleX(1.0569);">+0,0</span>
<div style="left:2442.20px;top:42.00px;width:412.00px;height:975.50px;background:#262626;"></div>
<div style="left:2854.20px;top:42.00px;width:13.80px;height:975.50px;background:#1e1e1e;"></div>
<div style="left:2856.20px;top:210.00px;width:14.00px;height:804.00px;background:#2d2d2d;border-radius:7px 0 0 7px;"></div>
<div class="c" style="left:2442px;top:42px;width:412px;height:80px">
<div style="left:10.80px;top:-12.00px;width:243.70px;height:40.40px;background:#141414;border-radius:4.5px;border:1.3px solid #383838;box-sizing:border-box;"></div>
<div style="left:218.00px;top:0.00px;width:1.40px;height:27.50px;background:#2c2c2c;"></div>
<div style="left:219.40px;top:0.00px;width:34.00px;height:27.40px;background:#1b1b1b;border-radius:0 0 4px 0;"></div>
</div>
<span class="t" style="left:2466.03px;top:42.28px;font-size:24px;line-height:24px;color:#c8c8c8;-webkit-text-stroke:0.5px #c8c8c8;transform:scaleX(0.9679);">Helvetica</span>
<svg style="left:2671.00px;top:50.00px" width="15.4" height="9.2" viewBox="0 0 15.4 9.2"><path d="M0.8 0.8L7.7 7.2L14.6 0.8" fill="none" stroke="#c0c0c0" stroke-width="2"/></svg>
<div style="left:2452.80px;top:83.50px;width:243.70px;height:34.90px;background:#141414;border-radius:4.5px;border:1.3px solid #383838;box-sizing:border-box;"></div>
<div style="left:2660.00px;top:84.50px;width:1.40px;height:32.90px;background:#2c2c2c;"></div>
<div style="left:2661.40px;top:84.70px;width:34.00px;height:32.50px;background:#1b1b1b;border-radius:0 4px 4px 0;"></div>
<span class="t" style="left:2466.04px;top:90.18px;font-size:24px;line-height:24px;color:#c8c8c8;-webkit-text-stroke:0.5px #c8c8c8;transform:scaleX(0.9608);">Regular</span>
<svg style="left:2671.00px;top:97.80px" width="15.4" height="9.2" viewBox="0 0 15.4 9.2"><path d="M0.8 0.8L7.7 7.2L14.6 0.8" fill="none" stroke="#c0c0c0" stroke-width="2"/></svg>
<svg style="left:2709.00px;top:42.00px" width="34" height="31" viewBox="0 0 34 31"><path d="M24.5 0H33V3.5L29 9.5L30.8 11.3L27.6 14.5L20.5 7.4L23.7 4.2Z" fill="#b0b0b0"/><path d="M21 9.5L5 25.5C3 27.5 1.5 27 1.2 28.5C1 30 2.5 30.8 3.6 29.8C4.6 28.8 4.6 28 6.2 26.6L24.5 13" fill="none" stroke="#b0b0b0" stroke-width="1.8"/></svg>
<div style="left:2782.40px;top:60.80px;width:59.00px;height:58.60px;background:#fff;border:2.2px solid #000;box-sizing:border-box;"></div>
<div style="left:2800.40px;top:80.00px;width:23.60px;height:21.80px;background:#262626;border:3.2px solid #000;box-sizing:border-box;"></div>
<svg style="left:2782.40px;top:60.80px" width="59" height="58.6" viewBox="0 0 59 58.6"><path d="M2 57L57.5 2" stroke="#d4151c" stroke-width="3.4"/></svg>
<div style="left:2756.50px;top:41.00px;width:59.00px;height:52.40px;background:#ececec;border:1.2px solid #1a1a1a;box-sizing:border-box;"></div>
<svg style="left:2819.00px;top:42.00px" width="22" height="19" viewBox="0 0 22 19"><path d="M1 3.5C9 2 14.5 5 14.5 12" fill="none" stroke="#b0b0b0" stroke-width="3"/><path d="M8.5 10.5H20.5L14.5 18.5Z" fill="#b0b0b0"/></svg>
<div style="left:2706.40px;top:84.30px;width:39.60px;height:33.30px;background:#fff;border:1.6px solid #a4a4a4;box-sizing:border-box;"></div>
<div style="left:2708.00px;top:85.90px;width:36.40px;height:14.20px;background:#000;"></div>
<div style="left:2708.00px;top:100.10px;width:36.40px;height:3.00px;background:#a4a4a4;"></div>
<div style="left:2758.00px;top:94.00px;width:22.00px;height:22.00px;background:#fff;border:1.6px solid #a4a4a4;box-sizing:border-box;"></div>
<svg style="left:2758.00px;top:94.00px" width="22" height="22" viewBox="0 0 22 22"><path d="M2.5 19.5L19.5 2.5" stroke="#e0585c" stroke-width="1.6"/></svg>
<div style="left:2452.00px;top:130.80px;width:390.20px;height:1.80px;background:#2f2f2f;"></div>
<span class="t" style="left:2465.00px;top:136.30px;font-size:40px;line-height:40px;color:#b0b0b0;font-weight:bold;font-family:'Liberation Serif', serif;transform:scaleX(0.8630);">T</span>
<span class="t" style="left:2452.00px;top:150.54px;font-size:23px;line-height:23px;color:#b0b0b0;font-weight:bold;font-family:'Liberation Serif', serif;transform:scaleX(0.9667);">T</span>
<span class="t" style="left:2503.40px;top:143.98px;font-size:24px;line-height:24px;color:#3498f1;-webkit-text-stroke:0.5px #3498f1;transform:scaleX(0.9337);">36</span>
<span class="t" style="left:2536.30px;top:143.98px;font-size:24px;line-height:24px;color:#a3a3a3;-webkit-text-stroke:0.5px #a3a3a3;transform:scaleX(1.0021);">px</span>
<svg style="left:2591.60px;top:151.30px" width="13.2" height="12" viewBox="0 0 13.2 12"><path d="M0 0H13.2L6.6 12Z" fill="#8c8c8c"/></svg>
<svg style="left:2661.70px;top:143.60px" width="33" height="35" viewBox="0 0 33 35"><path d="M17.5 12L22 1.5L26.5 12M19 8.5H25M10.5 14.3H32" fill="none" stroke="#b0b0b0" stroke-width="1.6"/><path d="M17.5 31L22 20.5L26.5 31M19 27.5H25M10.5 33.5H32" fill="none" stroke="#b0b0b0" stroke-width="1.6"/><path d="M5 18V30" stroke="#b0b0b0" stroke-width="1.8"/><path d="M0.5 20.5L5 15L9.5 20.5ZM0.5 28L5 33.5L9.5 28Z" fill="#b0b0b0"/></svg>
<span class="t" style="left:2726.20px;top:143.98px;font-size:24px;line-height:24px;color:#3498f1;-webkit-text-stroke:0.5px #3498f1;transform:scaleX(1.0077);">Auto</span>
<svg style="left:2817.40px;top:153.20px" width="13.2" height="12" viewBox="0 0 13.2 12"><path d="M0 0H13.2L6.6 12Z" fill="#8c8c8c"/></svg>
<svg style="left:2451.00px;top:184.00px" width="34" height="35" viewBox="0 0 34 35"><path d="M0.8 5L7.5 21L14.2 5M11.5 23L22.5 1M17 22L24.5 4.5L32 22M19.8 16.5H29.2" fill="none" stroke="#b0b0b0" stroke-width="1.8"/><path d="M33 29.5H20" stroke="#b0b0b0" stroke-width="1.8"/><path d="M17.5 29.5L24 25V34Z" fill="#b0b0b0"/></svg>
<span class="t" style="left:2502.42px;top:186.48px;font-size:24px;line-height:24px;color:#595959;-webkit-text-stroke:0.5px #595959;transform:scaleX(0.9773);">Metrics</span>
<svg style="left:2591.60px;top:193.20px" width="13.2" height="12" viewBox="0 0 13.2 12"><path d="M0 0H13.2L6.6 12Z" fill="#8c8c8c"/></svg>
<div style="left:2665.90px;top:186.00px;width:36.20px;height:21.70px;background:#b0b0b0;"></div>
<svg style="left:2665.90px;top:186.00px" width="37" height="35" viewBox="0 0 37 35"><path d="M3.5 4L10.2 18.5L17 4M18.5 18.5L25.5 4L32.5 18.5M21 13.8H30" fill="none" stroke="#262626" stroke-width="2.2"/><path d="M4 29.3H32" stroke="#b0b0b0" stroke-width="1.8"/><path d="M0 29.3L6.5 25V33.6ZM36.2 29.3L29.7 25V33.6Z" fill="#b0b0b0"/></svg>
<span class="t" style="left:2726.80px;top:186.48px;font-size:24px;line-height:24px;color:#3498f1;-webkit-text-stroke:0.5px #3498f1;transform:scaleX(0.9538);">0</span>
<svg style="left:2817.40px;top:193.20px" width="13.2" height="12" viewBox="0 0 13.2 12"><path d="M0 0H13.2L6.6 12Z" fill="#8c8c8c"/></svg>
<div style="left:2452.00px;top:231.20px;width:390.20px;height:1.80px;background:#2f2f2f;"></div>
<div style="left:2455.80px;top:248.20px;width:28.20px;height:2.20px;background:#b0b0b0;"></div>
<div style="left:2455.80px;top:255.50px;width:28.20px;height:4.60px;background:#b0b0b0;"></div>
<div style="left:2455.80px;top:265.30px;width:28.20px;height:6.30px;background:#b0b0b0;"></div>
<div style="left:2503.20px;top:258.60px;width:10.00px;height:2.20px;background:#3498f1;"></div>
<span class="t" style="left:2520.27px;top:248.28px;font-size:24px;line-height:24px;color:#a3a3a3;-webkit-text-stroke:0.5px #a3a3a3;transform:scaleX(1.0309);">px</span>
<svg style="left:2591.60px;top:253.30px" width="13.2" height="12" viewBox="0 0 13.2 12"><path d="M0 0H13.2L6.6 12Z" fill="#8c8c8c"/></svg>
<div style="left:2615.00px;top:242.50px;width:228.00px;height:36.50px;background:#1b1b1b;border-radius:5px;border:1.3px solid #383838;box-sizing:border-box;"></div>
<svg style="left:2817.40px;top:258.00px" width="15.2" height="9.2" viewBox="0 0 15.2 9.2"><path d="M0.8 0.8L7.6 7.2L14.399999999999999 0.8" fill="none" stroke="#c0c0c0" stroke-width="2"/></svg>
<div style="left:2452.00px;top:293.50px;width:390.20px;height:1.80px;background:#2f2f2f;"></div>
<span class="t" style="left:2465.50px;top:301.46px;font-size:41px;line-height:41px;color:#b0b0b0;font-weight:bold;font-family:'Liberation Serif', serif;transform:scaleX(0.9185);">T</span>
<svg style="left:2453.60px;top:308.00px" width="10.5" height="29" viewBox="0 0 10.5 29"><path d="M5.2 4V25" stroke="#b0b0b0" stroke-width="1.8"/><path d="M0.3 6.5L5.2 0L10.1 6.5ZM0.3 22.5L5.2 29L10.1 22.5Z" fill="#b0b0b0"/></svg>
<span class="t" style="left:2503.63px;top:308.78px;font-size:24px;line-height:24px;color:#3498f1;-webkit-text-stroke:0.5px #3498f1;transform:scaleX(0.9691);">100</span>
<span class="t" style="left:2548.60px;top:308.78px;font-size:24px;line-height:24px;color:#a3a3a3;-webkit-text-stroke:0.5px #a3a3a3;transform:scaleX(0.7619);">%</span>
<svg style="left:2591.60px;top:315.70px" width="13.2" height="12" viewBox="0 0 13.2 12"><path d="M0 0H13.2L6.6 12Z" fill="#8c8c8c"/></svg>
<span class="t" style="left:2667.50px;top:303.35px;font-size:36px;line-height:36px;color:#b0b0b0;font-weight:bold;font-family:'Liberation Serif', serif;transform:scaleX(1.1250);">T</span>
<svg style="left:2664.60px;top:333.00px" width="33.5" height="11" viewBox="0 0 33.5 11"><path d="M4 5.5H29.5" stroke="#b0b0b0" stroke-width="1.8"/><path d="M0 5.5L6.5 0.8V10.2ZM33.4 5.5L26.9 0.8V10.2Z" fill="#b0b0b0"/></svg>
<span class="t" style="left:2727.32px;top:310.48px;font-size:24px;line-height:24px;color:#3498f1;-webkit-text-stroke:0.5px #3498f1;transform:scaleX(0.9794);">100</span>
<span class="t" style="left:2772.70px;top:310.48px;font-size:24px;line-height:24px;color:#a3a3a3;-webkit-text-stroke:0.5px #a3a3a3;transform:scaleX(0.7476);">%</span>
<svg style="left:2817.40px;top:317.40px" width="13.2" height="12" viewBox="0 0 13.2 12"><path d="M0 0H13.2L6.6 12Z" fill="#8c8c8c"/></svg>
<svg style="left:2451.90px;top:355.80px" width="31" height="29" viewBox="0 0 31 29"><path d="M1.2 17.5L8.5 0.8L15.8 17.5M4 12H13M0 21.5H17.5M18.5 14.5H30.5" fill="none" stroke="#b0b0b0" stroke-width="1.7"/><path d="M25 28.5V19.5" stroke="#b0b0b0" stroke-width="1.8"/><path d="M20 22L25 15.8L30 22Z" fill="#b0b0b0"/></svg>
<span class="t" style="left:2470.50px;top:352.26px;font-size:18px;line-height:18px;color:#b0b0b0;-webkit-text-stroke:0.5px #b0b0b0;transform:scaleX(0.9182);">a</span>
<span class="t" style="left:2502.80px;top:352.08px;font-size:24px;line-height:24px;color:#3498f1;-webkit-text-stroke:0.5px #3498f1;transform:scaleX(0.9462);">0</span>
<span class="t" style="left:2521.47px;top:352.08px;font-size:24px;line-height:24px;color:#a3a3a3;-webkit-text-stroke:0.5px #a3a3a3;transform:scaleX(1.0309);">px</span>
<svg style="left:2591.60px;top:359.20px" width="13.2" height="12" viewBox="0 0 13.2 12"><path d="M0 0H13.2L6.6 12Z" fill="#8c8c8c"/></svg>
<svg style="left:2666.00px;top:354.00px" width="32" height="30" viewBox="0 0 32 30"><path d="M4.5 0V19M27.5 0V19" stroke="#b0b0b0" stroke-width="1.8" stroke-dasharray="1.8 1.8"/><path d="M9 5.5H22.5M15 1.5C14.5 8 13.5 13 10.5 15.5C8 17 7 14 9.5 11.5C13 8.5 20 8 22.5 11C24.5 14 21 17 17 17.5" fill="none" stroke="#b0b0b0" stroke-width="1.7"/><path d="M0.5 25.5H7M31.5 25.5H25" stroke="#b0b0b0" stroke-width="1.8"/><path d="M10.5 25.5L5.5 21.5V29.5ZM21.5 25.5L26.5 21.5V29.5Z" fill="#b0b0b0"/></svg>
<span class="t" style="left:2726.80px;top:350.88px;font-size:24px;line-height:24px;color:#3498f1;-webkit-text-stroke:0.5px #3498f1;transform:scaleX(0.9538);">0</span>
<span class="t" style="left:2745.10px;top:350.88px;font-size:24px;line-height:24px;color:#a3a3a3;-webkit-text-stroke:0.5px #a3a3a3;transform:scaleX(0.7190);">%</span>
<svg style="left:2817.40px;top:356.60px" width="13.2" height="12" viewBox="0 0 13.2 12"><path d="M0 0H13.2L6.6 12Z" fill="#8c8c8c"/></svg>
<div style="left:2452.00px;top:397.70px;width:390.20px;height:1.80px;background:#2f2f2f;"></div>
<span class="t" style="left:2504.20px;top:412.36px;font-size:30.5px;line-height:30.5px;color:#b0b0b0;font-weight:bold;font-family:'Liberation Serif', serif;transform:scaleX(1.2100);">T</span>
<span class="t" style="left:2553.86px;top:412.36px;font-size:30.5px;line-height:30.5px;color:#b0b0b0;font-style:italic;font-family:'Liberation Serif', serif;-webkit-text-stroke:0.8px #b0b0b0;transform:scaleX(1.2176);">T</span>
<span class="t" style="left:2607.90px;top:412.36px;font-size:30.5px;line-height:30.5px;color:#b0b0b0;font-family:'Liberation Serif', serif;-webkit-text-stroke:0.8px #b0b0b0;transform:scaleX(0.9620);">TT</span>
<span class="t" style="left:2657.90px;top:412.36px;font-size:30.5px;line-height:30.5px;color:#b0b0b0;font-family:'Liberation Serif', serif;-webkit-text-stroke:0.8px #b0b0b0;transform:scaleX(0.9789);">T</span>
<span class="t" style="left:2677.50px;top:418.22px;font-size:23.5px;line-height:23.5px;color:#b0b0b0;font-family:'Liberation Serif', serif;-webkit-text-stroke:0.8px #b0b0b0;transform:scaleX(1.1857);">T</span>
<span class="t" style="left:2722.30px;top:412.36px;font-size:30.5px;line-height:30.5px;color:#b0b0b0;font-family:'Liberation Serif', serif;-webkit-text-stroke:0.8px #b0b0b0;">T</span>
<span class="t" style="left:2743.50px;top:415.37px;font-size:11.5px;line-height:11.5px;color:#b0b0b0;font-weight:bold;font-family:'Liberation Serif', serif;transform:scaleX(1.0500);">1</span>
<span class="t" style="left:2772.40px;top:412.36px;font-size:30.5px;line-height:30.5px;color:#b0b0b0;font-family:'Liberation Serif', serif;-webkit-text-stroke:0.8px #b0b0b0;">T</span>
<span class="t" style="left:2792.30px;top:430.17px;font-size:11.5px;line-height:11.5px;color:#b0b0b0;font-weight:bold;font-family:'Liberation Serif', serif;">1</span>
<div style="left:2444.20px;top:463.90px;width:408.00px;height:2.20px;background:#161616;"></div>
<span class="t" style="left:2466.05px;top:483.68px;font-size:24px;line-height:24px;color:#cacaca;-webkit-text-stroke:0.7px #cacaca;transform:scaleX(0.9511);">Effects &amp; Presets</span>
<div style="left:2816.20px;top:490.00px;width:16.00px;height:2.00px;background:#c0c0c0;"></div>
<div style="left:2816.20px;top:496.05px;width:16.00px;height:2.00px;background:#c0c0c0;"></div>
<div style="left:2816.20px;top:502.10px;width:16.00px;height:2.00px;background:#c0c0c0;"></div>
<div style="left:2453.30px;top:529.80px;width:389.40px;height:36.20px;background:#141414;border-radius:5.5px;border:1.3px solid #383838;box-sizing:border-box;"></div>
<svg style="left:2466.40px;top:536.30px" width="34" height="22" viewBox="0 0 34 22"><circle cx="13.6" cy="8.2" r="7.2" fill="none" stroke="#3a96f0" stroke-width="2.2"/><path d="M8.6 13.6L0.8 20.8" stroke="#3a96f0" stroke-width="2.4"/><path d="M22.5 13.5H33.5L28 19Z" fill="#3a96f0"/></svg>
<span class="t" style="left:2510.00px;top:535.88px;font-size:24px;line-height:24px;color:#cacaca;-webkit-text-stroke:0.5px #cacaca;">exposure</span>
<svg style="left:2819.10px;top:541.40px" width="16" height="15" viewBox="0 0 16 15"><path d="M1 1L15 14M15 1L1 14" stroke="#cacaca" stroke-width="2.6"/></svg>
<div style="left:2445.00px;top:572.40px;width:407.00px;height:2.20px;background:#060606;"></div>
<div style="left:2445.00px;top:605.70px;width:407.00px;height:2.20px;background:#1f1f1f;"></div>
<div style="left:2445.00px;top:639.73px;width:407.00px;height:2.20px;background:#1f1f1f;"></div>
<div style="left:2445.00px;top:673.76px;width:407.00px;height:2.20px;background:#1f1f1f;"></div>
<div style="left:2445.00px;top:707.79px;width:407.00px;height:2.20px;background:#1f1f1f;"></div>
<div style="left:2445.00px;top:741.82px;width:407.00px;height:2.20px;background:#1f1f1f;"></div>
<div style="left:2445.00px;top:775.85px;width:407.00px;height:2.20px;background:#1f1f1f;"></div>
<div style="left:2445.00px;top:809.88px;width:407.00px;height:2.20px;background:#1f1f1f;"></div>
<div style="left:2445.00px;top:843.91px;width:407.00px;height:2.20px;background:#1f1f1f;"></div>
<div style="left:2445.00px;top:877.94px;width:407.00px;height:2.20px;background:#1f1f1f;"></div>
<svg style="left:2453.60px;top:583.30px" width="14" height="14.6" viewBox="0 0 14 14.6"><path d="M0 0H14L7 14.6Z" fill="#b2b2b2"/></svg>
<span class="t" style="left:2475.20px;top:578.18px;font-size:24px;line-height:24px;color:#a3a3a3;-webkit-text-stroke:0.5px #a3a3a3;transform:scaleX(0.9556);">*</span>
<span class="t" style="left:2492.00px;top:578.18px;font-size:24px;line-height:24px;color:#a3a3a3;-webkit-text-stroke:0.5px #a3a3a3;transform:scaleX(0.9807);">Animation Presets</span>
<svg style="left:2487.80px;top:617.33px" width="14" height="14.6" viewBox="0 0 14 14.6"><path d="M0 0H14L7 14.6Z" fill="#b2b2b2"/></svg>
<svg style="left:2509.60px;top:612.13px" width="29" height="22" viewBox="0 0 29 22"><path d="M0 3.2H1.5V1.2A1.2 1.2 0 0 1 2.7 0H9.3L11 3.2H28.4V21.8H0Z" fill="#b0b0b0"/></svg>
<span class="t" style="left:2547.47px;top:612.21px;font-size:24px;line-height:24px;color:#a3a3a3;-webkit-text-stroke:0.5px #a3a3a3;transform:scaleX(0.9628);">Image – Special Effects</span>
<svg style="left:2545.90px;top:648.06px" width="24.6" height="22.4" viewBox="0 0 24.6 22.4"><path d="M0 5.2H2.6V1A1 1 0 0 1 3.6 0H8.4A1 1 0 0 1 9.4 1V5.2H15V1A1 1 0 0 1 16 0H20.8A1 1 0 0 1 21.8 1V5.2H24.4V22.2H0Z" fill="#b0b0b0"/></svg>
<svg style="left:2553.70px;top:653.56px" width="14.4" height="15.6" viewBox="0 0 24 26"><path d="M15 2.2C13.8 0.5 11.6 0.5 10.7 3.2L1.7 25.3M1.4 10H12.6" fill="none" stroke="#262626" stroke-width="2.7"/><path d="M9.4 9.3L20.6 21.5M21.5 9L8.6 21.5" fill="none" stroke="#262626" stroke-width="2.32"/></svg>
<span class="t" style="left:2581.81px;top:646.24px;font-size:24px;line-height:24px;color:#a3a3a3;-webkit-text-stroke:0.5px #a3a3a3;transform:scaleX(0.9853);">Embosse...tiple Exposure</span>
<svg style="left:2487.80px;top:685.39px" width="14" height="14.6" viewBox="0 0 14 14.6"><path d="M0 0H14L7 14.6Z" fill="#b2b2b2"/></svg>
<svg style="left:2509.60px;top:680.19px" width="29" height="22" viewBox="0 0 29 22"><path d="M0 3.2H1.5V1.2A1.2 1.2 0 0 1 2.7 0H9.3L11 3.2H28.4V21.8H0Z" fill="#b0b0b0"/></svg>
<span class="t" style="left:2548.50px;top:680.27px;font-size:24px;line-height:24px;color:#a3a3a3;-webkit-text-stroke:0.5px #a3a3a3;transform:scaleX(1.0643);">Text</span>
<svg style="left:2521.60px;top:719.42px" width="14" height="14.6" viewBox="0 0 14 14.6"><path d="M0 0H14L7 14.6Z" fill="#b2b2b2"/></svg>
<svg style="left:2543.80px;top:714.22px" width="29" height="22" viewBox="0 0 29 22"><path d="M0 3.2H1.5V1.2A1.2 1.2 0 0 1 2.7 0H9.3L11 3.2H28.4V21.8H0Z" fill="#b0b0b0"/></svg>
<span class="t" style="left:2581.99px;top:714.30px;font-size:24px;line-height:24px;color:#a3a3a3;-webkit-text-stroke:0.5px #a3a3a3;transform:scaleX(1.0101);">Lights and Optical</span>
<svg style="left:2580.00px;top:750.15px" width="24.6" height="22.4" viewBox="0 0 24.6 22.4"><path d="M0 5.2H2.6V1A1 1 0 0 1 3.6 0H8.4A1 1 0 0 1 9.4 1V5.2H15V1A1 1 0 0 1 16 0H20.8A1 1 0 0 1 21.8 1V5.2H24.4V22.2H0Z" fill="#b0b0b0"/></svg>
<svg style="left:2587.80px;top:755.65px" width="14.4" height="15.6" viewBox="0 0 24 26"><path d="M15 2.2C13.8 0.5 11.6 0.5 10.7 3.2L1.7 25.3M1.4 10H12.6" fill="none" stroke="#262626" stroke-width="2.7"/><path d="M9.4 9.3L20.6 21.5M21.5 9L8.6 21.5" fill="none" stroke="#262626" stroke-width="2.32"/></svg>
<span class="t" style="left:2616.03px;top:748.33px;font-size:24px;line-height:24px;color:#a3a3a3;-webkit-text-stroke:0.5px #a3a3a3;transform:scaleX(0.9706);">Exposure</span>
<svg style="left:2580.00px;top:784.18px" width="24.6" height="22.4" viewBox="0 0 24.6 22.4"><path d="M0 5.2H2.6V1A1 1 0 0 1 3.6 0H8.4A1 1 0 0 1 9.4 1V5.2H15V1A1 1 0 0 1 16 0H20.8A1 1 0 0 1 21.8 1V5.2H24.4V22.2H0Z" fill="#b0b0b0"/></svg>
<svg style="left:2587.80px;top:789.68px" width="14.4" height="15.6" viewBox="0 0 24 26"><path d="M15 2.2C13.8 0.5 11.6 0.5 10.7 3.2L1.7 25.3M1.4 10H12.6" fill="none" stroke="#262626" stroke-width="2.7"/><path d="M9.4 9.3L20.6 21.5M21.5 9L8.6 21.5" fill="none" stroke="#262626" stroke-width="2.32"/></svg>
<span class="t" style="left:2616.02px;top:782.36px;font-size:24px;line-height:24px;color:#a3a3a3;-webkit-text-stroke:0.5px #a3a3a3;transform:scaleX(0.9832);">Flicker Exposure</span>
<svg style="left:2580.00px;top:818.21px" width="24.6" height="22.4" viewBox="0 0 24.6 22.4"><path d="M0 5.2H2.6V1A1 1 0 0 1 3.6 0H8.4A1 1 0 0 1 9.4 1V5.2H15V1A1 1 0 0 1 16 0H20.8A1 1 0 0 1 21.8 1V5.2H24.4V22.2H0Z" fill="#b0b0b0"/></svg>
<svg style="left:2587.80px;top:823.71px" width="14.4" height="15.6" viewBox="0 0 24 26"><path d="M15 2.2C13.8 0.5 11.6 0.5 10.7 3.2L1.7 25.3M1.4 10H12.6" fill="none" stroke="#262626" stroke-width="2.7"/><path d="M9.4 9.3L20.6 21.5M21.5 9L8.6 21.5" fill="none" stroke="#262626" stroke-width="2.32"/></svg>
<span class="t" style="left:2616.04px;top:816.39px;font-size:24px;line-height:24px;color:#a3a3a3;-webkit-text-stroke:0.5px #a3a3a3;transform:scaleX(0.9565);">Pulse Exposure</span>
<svg style="left:2453.60px;top:855.54px" width="14" height="14.6" viewBox="0 0 14 14.6"><path d="M0 0H14L7 14.6Z" fill="#b2b2b2"/></svg>
<span class="t" style="left:2473.18px;top:850.42px;font-size:24px;line-height:24px;color:#a3a3a3;-webkit-text-stroke:0.5px #a3a3a3;transform:scaleX(1.0169);">Color Correction</span>
<div style="left:2444.20px;top:880.20px;width:408.00px;height:32.40px;background:#343434;"></div>
<svg style="left:2511.70px;top:886.27px" width="24.6" height="22.4" viewBox="0 0 24.6 22.4"><path d="M0 5.2H2.6V1A1 1 0 0 1 3.6 0H8.4A1 1 0 0 1 9.4 1V5.2H15V1A1 1 0 0 1 16 0H20.8A1 1 0 0 1 21.8 1V5.2H24.4V22.2H0Z" fill="#b0b0b0"/></svg>
<span class="t" style="left:2513.90px;top:891.88px;font-size:17px;line-height:17px;color:#262626;-webkit-text-stroke:0.5px #262626;transform:scaleX(1.0946);">32</span>
<div style="left:2543.80px;top:882.10px;width:114.30px;height:27.70px;background:#a9a9a9;"></div>
<span class="t" style="left:2548.54px;top:883.98px;font-size:24px;line-height:24px;color:#161616;-webkit-text-stroke:0.5px #161616;transform:scaleX(0.9626);">Exposure</span>
<div style="left:2444.20px;top:912.60px;width:408.00px;height:2.80px;background:#060606;"></div>
<div style="left:2850.00px;top:915.40px;width:2.20px;height:32.00px;background:#060606;"></div>
<svg style="left:2813.70px;top:920.20px" width="24.5" height="23.6" viewBox="0 0 24.5 23.6"><path d="M0 0H24.3V23.4H11V11.5H0Z" fill="#b0b0b0"/><path d="M0 13.5H9.5V23Z" fill="#b0b0b0"/></svg>
<div style="left:2444.20px;top:954.00px;width:408.00px;height:2.20px;background:#1a1a1a;"></div>
<span class="t" style="left:2466.04px;top:974.08px;font-size:24px;line-height:24px;color:#b6b6b6;-webkit-text-stroke:0.5px #b6b6b6;transform:scaleX(0.9642);">Paragraph</span>
<div style="left:2444.20px;top:1012.40px;width:408.00px;height:3.00px;background:#171717;"></div>
<div style="left:2.20px;top:1025.60px;width:2865.80px;height:524.40px;background:#262626;"></div>
<div style="left:54.00px;top:1042.00px;width:20.20px;height:19.90px;background:#a9977a;"></div>
<span class="t" style="left:96.60px;top:1041.88px;font-size:24px;line-height:24px;color:#a3a3a3;-webkit-text-stroke:0.5px #a3a3a3;transform:scaleX(0.9972);">footage</span>
<svg style="left:256.40px;top:1050.60px" width="9.6" height="9.6" viewBox="0 0 9.6 9.6"><path d="M0 0L9.6 9.6M9.6 0L0 9.6" stroke="#a0a0a0" stroke-width="1.6"/></svg>
<div style="left:286.00px;top:1042.00px;width:20.20px;height:19.90px;background:#a9977a;"></div>
<span class="t" style="left:328.32px;top:1041.88px;font-size:24px;line-height:24px;color:#d2d2d2;-webkit-text-stroke:0.5px #d2d2d2;transform:scaleX(0.8837);">PROFOG 10</span>
<div style="left:469.80px;top:1047.60px;width:16.60px;height:2.00px;background:#c4c4c4;"></div>
<div style="left:469.80px;top:1053.85px;width:16.60px;height:2.00px;background:#c4c4c4;"></div>
<div style="left:469.80px;top:1060.10px;width:16.60px;height:2.00px;background:#c4c4c4;"></div>
<div style="left:256.20px;top:1074.00px;width:231.00px;height:4.20px;background:#c4c4c4;"></div>
<div style="left:560.30px;top:1042.00px;width:20.20px;height:19.90px;background:#a9977a;"></div>
<span class="t" style="left:609.38px;top:1041.88px;font-size:24px;line-height:24px;color:#a3a3a3;-webkit-text-stroke:0.5px #a3a3a3;transform:scaleX(1.0219);">light Comp 1</span>
<div style="left:858.20px;top:1042.00px;width:20.20px;height:19.90px;background:#a9977a;"></div>
<span class="t" style="left:899.20px;top:1041.88px;font-size:24px;line-height:24px;color:#a3a3a3;-webkit-text-stroke:0.5px #a3a3a3;">Comp 1</span>
<div style="left:1092.00px;top:1042.00px;width:20.20px;height:19.90px;background:#a9977a;"></div>
<span class="t" style="left:1134.30px;top:1041.88px;font-size:24px;line-height:24px;color:#a3a3a3;-webkit-text-stroke:0.5px #a3a3a3;">Light Comp</span>
<span class="t" style="left:29.93px;top:1089.58px;font-size:30.5px;line-height:30.5px;color:#3398f0;font-weight:bold;transform:scaleX(1.0726);">0:00:04:11</span>
<span class="t" style="left:25.00px;top:1123.80px;font-size:21.5px;line-height:21.5px;color:#1f7bc9;-webkit-text-stroke:0.5px #1f7bc9;transform:scaleX(1.0396);">00107 (24.00 fps)</span>
<div style="left:221.40px;top:1097.30px;width:1077.00px;height:37.80px;background:#141414;border-radius:6px;border:1.2px solid #303030;box-sizing:border-box;"></div>
<svg style="left:234.40px;top:1104.80px" width="35" height="22" viewBox="0 0 35 22"><circle cx="14.6" cy="8" r="7" fill="none" stroke="#bcbcbc" stroke-width="2.2"/><path d="M9.5 13.4L0.8 20.8" stroke="#bcbcbc" stroke-width="2.4"/><path d="M22.5 13.6H34L28.2 19.4Z" fill="#bcbcbc"/></svg>
<svg style="left:1329.90px;top:1104.20px" width="35" height="27" viewBox="0 0 35 27"><path d="M0 4.4H22M17 4.4V15H22" fill="none" stroke="#b4b4b4" stroke-width="2"/><rect x="5" y="1.2" width="7.6" height="6.2" fill="#b4b4b4"/><rect x="22" y="1" width="8.4" height="6.8" fill="#b4b4b4"/><rect x="22" y="11.4" width="8.4" height="6.6" fill="#b4b4b4"/><path d="M25 20.6H34.4L29.7 26Z" fill="#b4b4b4"/></svg>
<svg style="left:1395.90px;top:1098.80px" width="35" height="33" viewBox="0 0 35 33"><path d="M8 0V16M0 8H16M2.3 2.3L13.7 13.7M13.7 2.3L2.3 13.7" stroke="#b4b4b4" stroke-width="2"/><circle cx="8" cy="8" r="4.6" fill="#b4b4b4"/><path d="M13.5 19L23.5 14L33.5 19V28L23.5 32.5L13.5 28ZM13.5 19L23.5 23.5L33.5 19M23.5 23.5V32.5" fill="#262626" stroke="#b4b4b4" stroke-width="2" stroke-linejoin="round"/></svg>
<svg style="left:1465.80px;top:1103.50px" width="32" height="25" viewBox="0 0 32 25"><path d="M3.5 14C3.5 5.5 8.5 1 16 1C23.5 1 28.5 5.5 28.5 14L27 12.5L25 14.5L23 12.5L21 14.5H11L9 12.5L7 14.5L5 12.5Z" fill="#b4b4b4"/><circle cx="11.2" cy="8.6" r="2.4" fill="#262626"/><circle cx="20.8" cy="8.6" r="2.4" fill="#262626"/><rect x="0" y="15" width="32" height="9.8" fill="#8a8a8a"/><path d="M13.8 10.5H18.2V20.4A2.2 2.2 0 0 1 13.8 20.4Z" fill="#b4b4b4"/></svg>
<svg style="left:1519.50px;top:1102.00px" width="29" height="28" viewBox="0 0 29 28"><rect x="7" y="0" width="21" height="22" fill="#b4b4b4"/><path d="M10.5 3V19M24.5 3V19" stroke="#262626" stroke-width="2" stroke-dasharray="2.4 2"/><rect x="13" y="10" width="9" height="2" fill="#262626"/><path d="M4 4V25H24M1 8V28H20" fill="none" stroke="#b4b4b4" stroke-width="1.8"/></svg>
<svg style="left:1571.70px;top:1102.00px" width="30" height="28" viewBox="0 0 30 28"><circle cx="11" cy="17" r="9.5" fill="none" stroke="#b4b4b4" stroke-width="2"/><circle cx="14.5" cy="14" r="9.5" fill="#262626" stroke="#b4b4b4" stroke-width="2"/><circle cx="18.5" cy="10.5" r="10" fill="#6c6c6c" stroke="#b4b4b4" stroke-width="2"/></svg>
<svg style="left:1638.00px;top:1100.80px" width="33" height="29" viewBox="0 0 33 29"><rect x="2" y="4" width="29" height="23.5" fill="none" stroke="#b4b4b4" stroke-width="2.2"/><path d="M6 8C16 8 17 23.5 28 23.5" fill="none" stroke="#b4b4b4" stroke-width="2"/><path d="M7 0V4M14 0V4M21 0V4M28 0V4M0 10H2M0 17H2M0 24H2" stroke="#b4b4b4" stroke-width="2"/></svg>
<div style="left:5.00px;top:1151.90px;width:1698.00px;height:2.40px;background:#0c0c0c;"></div>
<div style="left:5.00px;top:1154.30px;width:1698.00px;height:35.80px;background:#323232;"></div>
<div style="left:5.00px;top:1190.00px;width:1698.00px;height:2.40px;background:#0c0c0c;"></div>
<div style="left:5.00px;top:1192.40px;width:1698.00px;height:31.60px;background:#323232;"></div>
<div style="left:137.20px;top:1163.50px;width:2.00px;height:19.60px;background:#0f0f0f;"></div>
<div style="left:202.00px;top:1163.50px;width:2.00px;height:19.60px;background:#0f0f0f;"></div>
<div style="left:267.60px;top:1163.50px;width:2.00px;height:19.60px;background:#0f0f0f;"></div>
<div style="left:527.80px;top:1163.50px;width:2.00px;height:19.60px;background:#0f0f0f;"></div>
<div style="left:982.20px;top:1163.50px;width:2.00px;height:19.60px;background:#0f0f0f;"></div>
<div style="left:1435.80px;top:1163.50px;width:2.00px;height:19.60px;background:#0f0f0f;"></div>
<div style="left:1669.60px;top:1163.50px;width:2.00px;height:19.60px;background:#0f0f0f;"></div>
<svg style="left:14.80px;top:1166.00px" width="21.6" height="13.4" viewBox="0 0 21.6 13.4"><path d="M0.2 6.7C5 -1.9 16.6 -1.9 21.4 6.7C16.6 15.3 5 15.3 0.2 6.7Z" fill="#b4b4b4"/><circle cx="10.8" cy="6.5" r="4.3" fill="#323232"/><circle cx="12.4" cy="5" r="1.1" fill="#b4b4b4"/></svg>
<svg style="left:43.80px;top:1161.60px" width="24" height="23" viewBox="0 0 24 23"><path d="M0 7H5L12 0V22.4L5 15.5H0Z" fill="#b4b4b4"/><path d="M14.5 6.5A5.5 5.5 0 0 1 14.5 16M15 1.5A10.5 10.5 0 0 1 15 21" fill="none" stroke="#b4b4b4" stroke-width="2"/></svg>
<svg style="left:77.90px;top:1166.00px" width="14.4" height="14.4" viewBox="0 0 14.4 14.4"><circle cx="7.2" cy="7.2" r="7.2" fill="#b4b4b4"/></svg>
<svg style="left:105.80px;top:1162.00px" width="19" height="20" viewBox="0 0 19 20"><path d="M4.2 9V6A5.3 5.3 0 0 1 14.8 6V9" fill="none" stroke="#b4b4b4" stroke-width="2.4"/><rect x="0.3" y="8.4" width="18.4" height="11.4" rx="1" fill="#b4b4b4"/><circle cx="9.5" cy="12.8" r="2.1" fill="#323232"/><path d="M8.5 13.5h2l0.6 3.8h-3.2z" fill="#323232"/></svg>
<svg style="left:166.40px;top:1161.20px" width="25" height="24" viewBox="0 0 25 24"><path d="M0.5 1.5L10 0.5L24.5 15L15 23.8L1 9.5Z" fill="#b4b4b4"/><circle cx="6" cy="6" r="2.1" fill="#323232"/></svg>
<span class="t" style="left:214.00px;top:1162.55px;font-size:20.5px;line-height:20.5px;color:#a3a3a3;-webkit-text-stroke:0.5px #a3a3a3;transform:scaleX(0.9833);">#</span>
<span class="t" style="left:279.69px;top:1162.55px;font-size:20.5px;line-height:20.5px;color:#a3a3a3;-webkit-text-stroke:0.5px #a3a3a3;transform:scaleX(0.9106);">Layer Name</span>
<svg style="left:539.30px;top:1163.60px" width="24.0" height="19.0" viewBox="0 0 24 19"><path d="M4 12.6C4 5.4 7.4 1 12 1C16.6 1 20 5.4 20 12.6Z" fill="#b4b4b4"/><ellipse cx="8.9" cy="8.6" rx="1.9" ry="2.7" fill="#323232"/><ellipse cx="15.1" cy="8.6" rx="1.9" ry="2.7" fill="#323232"/><path d="M10.3 10.5H13.7V17A1.7 1.7 0 0 1 10.3 17Z" fill="#b4b4b4" stroke="#323232" stroke-width="0.9"/><path d="M0 14H8.8M15.2 14H24" stroke="#b4b4b4" stroke-width="1.9"/></svg>
<svg style="left:571.40px;top:1163.20px" width="19.4" height="19.4" viewBox="0 0 19.4 19.4"><path d="M10 0V20M0 10H20M3 3L17 17M17 3L3 17" stroke="#b4b4b4" stroke-width="1.8"/><circle cx="10" cy="10" r="3.6" fill="#323232" stroke="#b4b4b4" stroke-width="2"/></svg>
<svg style="left:600.00px;top:1162.50px" width="21" height="20" viewBox="0 0 21 20"><rect x="0.0" y="0.0" width="4.6" height="4.4" fill="#b4b4b4"/><rect x="3.9" y="3.7" width="4.6" height="4.4" fill="#b4b4b4"/><rect x="7.8" y="7.4" width="4.6" height="4.4" fill="#b4b4b4"/><rect x="11.7" y="11.1" width="4.6" height="4.4" fill="#b4b4b4"/><rect x="15.6" y="14.8" width="4.6" height="4.4" fill="#b4b4b4"/></svg>
<svg style="left:629.20px;top:1158.30px" width="24.0" height="26.0" viewBox="0 0 24 26"><path d="M15 2.2C13.8 0.5 11.6 0.5 10.7 3.2L1.7 25.3M1.4 10H12.6" fill="none" stroke="#b4b4b4" stroke-width="2.1"/><path d="M9.4 9.3L20.6 21.5M21.5 9L8.6 21.5" fill="none" stroke="#b4b4b4" stroke-width="1.81"/></svg>
<svg style="left:658.60px;top:1162.00px" width="23" height="22" viewBox="0 0 23 22"><rect x="0" y="0" width="23" height="22" rx="1.5" fill="#b4b4b4"/><rect x="5.2" y="2.5" width="12.6" height="7.2" fill="#323232"/><rect x="5.2" y="12.3" width="12.6" height="7.2" fill="#323232"/><path d="M2.6 2V20M20.4 2V20" stroke="#323232" stroke-width="1.8" stroke-dasharray="2.2 1.8"/></svg>
<svg style="left:688.70px;top:1160.50px" width="26" height="25" viewBox="0 0 26 25"><circle cx="8.5" cy="16" r="7.6" fill="none" stroke="#b4b4b4" stroke-width="1.8"/><circle cx="12" cy="13" r="7.6" fill="#323232" stroke="#b4b4b4" stroke-width="1.8"/><circle cx="16.5" cy="9" r="8.2" fill="#6c6c6c" stroke="#b4b4b4" stroke-width="1.8"/></svg>
<svg style="left:720.30px;top:1162.60px" width="21.4" height="21.4" viewBox="0 0 21.4 21.4"><circle cx="10.7" cy="10.7" r="9.6" fill="none" stroke="#b4b4b4" stroke-width="2.2"/><path d="M17.5 3.9A9.6 9.6 0 0 1 3.9 17.5Z" fill="#b4b4b4"/></svg>
<svg style="left:749.50px;top:1161.50px" width="23" height="24" viewBox="0 0 23 24"><path d="M11.5 1L22 6.2V17.8L11.5 23L1 17.8V6.2ZM1 6.2L11.5 11.6L22 6.2M11.5 11.6V23" fill="none" stroke="#b4b4b4" stroke-width="2" stroke-linejoin="round"/></svg>
<span class="t" style="left:993.26px;top:1162.55px;font-size:20.5px;line-height:20.5px;color:#a3a3a3;-webkit-text-stroke:0.5px #a3a3a3;transform:scaleX(0.9383);">Mode</span>
<span class="t" style="left:1202.50px;top:1162.55px;font-size:20.5px;line-height:20.5px;color:#a3a3a3;-webkit-text-stroke:0.5px #a3a3a3;transform:scaleX(0.8308);">T</span>
<span class="t" style="left:1236.00px;top:1162.55px;font-size:20.5px;line-height:20.5px;color:#a3a3a3;-webkit-text-stroke:0.5px #a3a3a3;transform:scaleX(0.9524);">TrkMat</span>
<span class="t" style="left:1447.71px;top:1162.55px;font-size:20.5px;line-height:20.5px;color:#a3a3a3;-webkit-text-stroke:0.5px #a3a3a3;transform:scaleX(0.8894);">Parent</span>
<div style="left:12.10px;top:1194.30px;width:26.10px;height:25.60px;background:#222222;"></div>
<svg style="left:14.80px;top:1200.20px" width="21.6" height="13.4" viewBox="0 0 21.6 13.4"><path d="M0.2 6.7C5 -1.9 16.6 -1.9 21.4 6.7C16.6 15.3 5 15.3 0.2 6.7Z" fill="#c4c4c4"/><circle cx="10.8" cy="6.5" r="4.3" fill="#222222"/><circle cx="12.4" cy="5" r="1.1" fill="#c4c4c4"/></svg>
<div style="left:72.30px;top:1194.30px;width:25.50px;height:25.60px;background:#222222;"></div>
<div style="left:102.10px;top:1194.30px;width:25.90px;height:25.60px;background:#222222;"></div>
<svg style="left:149.00px;top:1201.80px" width="16" height="13" viewBox="0 0 16 13"><path d="M0 0L16 6.5L0 13Z" fill="#b8b8b8"/></svg>
<div style="left:173.70px;top:1196.10px;width:24.40px;height:24.20px;background:#a9977a;"></div>
<span class="t" style="left:217.75px;top:1195.09px;font-size:23.4px;line-height:23.4px;color:#a3a3a3;font-weight:bold;transform:scaleX(0.8500);">1</span>
<svg style="left:272.00px;top:1196.00px" width="32" height="26.4" viewBox="0 0 32 26.4"><rect x="0" y="0" width="32" height="26.4" fill="#bdbdbd"/><rect x="1.2" y="2.4" width="2.6" height="3.4" fill="#3c3c3c"/><rect x="1.2" y="8.6" width="2.6" height="3.4" fill="#3c3c3c"/><rect x="1.2" y="14.8" width="2.6" height="3.4" fill="#3c3c3c"/><rect x="1.2" y="21.0" width="2.6" height="3.4" fill="#3c3c3c"/><rect x="28.2" y="2.4" width="2.6" height="3.4" fill="#3c3c3c"/><rect x="28.2" y="8.6" width="2.6" height="3.4" fill="#3c3c3c"/><rect x="28.2" y="14.8" width="2.6" height="3.4" fill="#3c3c3c"/><rect x="28.2" y="21.0" width="2.6" height="3.4" fill="#3c3c3c"/><circle cx="11.8" cy="9.4" r="3.9" fill="#3d8cf0" stroke="#2a2a2a" stroke-width="0.9"/><rect x="17.2" y="9" width="6.2" height="7.2" fill="#f0383e" stroke="#2a2a2a" stroke-width="0.9"/><path d="M15 11.6L19.8 18.8H10.1Z" fill="#27a433" stroke="#2a2a2a" stroke-width="0.9"/><rect x="5.8" y="22.1" width="21.6" height="1.7" fill="#3c3c3c"/></svg>
<span class="t" style="left:312.16px;top:1195.09px;font-size:23.4px;line-height:23.4px;color:#a3a3a3;font-weight:bold;transform:scaleX(1.0375);">[ light Comp 1]</span>
<div style="left:538.30px;top:1194.30px;width:25.70px;height:25.60px;background:#222222;"></div>
<svg style="left:539.30px;top:1197.80px" width="24.0" height="19.0" viewBox="0 0 24 19"><path d="M4 12.6C4 5.4 7.4 1 12 1C16.6 1 20 5.4 20 12.6Z" fill="#c8c8c8"/><ellipse cx="8.9" cy="8.6" rx="1.9" ry="2.7" fill="#222222"/><ellipse cx="15.1" cy="8.6" rx="1.9" ry="2.7" fill="#222222"/><path d="M10.3 10.5H13.7V17A1.7 1.7 0 0 1 10.3 17Z" fill="#c8c8c8" stroke="#222222" stroke-width="0.9"/><path d="M0 14H8.8M15.2 14H24" stroke="#c8c8c8" stroke-width="1.9"/></svg>
<div style="left:568.20px;top:1194.30px;width:25.60px;height:25.60px;background:#222222;"></div>
<div style="left:598.00px;top:1194.30px;width:25.60px;height:25.60px;background:#222222;"></div>
<svg style="left:599.80px;top:1196.00px" width="23" height="22" viewBox="0 0 23 22"><path d="M1 21L22 1" stroke="#c4c4c4" stroke-width="2.2"/></svg>
<div style="left:628.20px;top:1194.30px;width:25.70px;height:25.60px;background:#222222;"></div>
<svg style="left:629.20px;top:1191.90px" width="24.0" height="26.0" viewBox="0 0 24 26"><path d="M15 2.2C13.8 0.5 11.6 0.5 10.7 3.2L1.7 25.3M1.4 10H12.6" fill="none" stroke="#c8c8c8" stroke-width="2.1"/><path d="M9.4 9.3L20.6 21.5M21.5 9L8.6 21.5" fill="none" stroke="#c8c8c8" stroke-width="1.81"/></svg>
<div style="left:688.30px;top:1194.30px;width:25.70px;height:25.60px;background:#222222;"></div>
<div style="left:718.30px;top:1194.30px;width:25.70px;height:25.60px;background:#222222;"></div>
<div style="left:747.90px;top:1194.30px;width:25.70px;height:25.60px;background:#222222;"></div>
<div style="left:990.10px;top:1194.30px;width:193.60px;height:27.00px;background:#1f1f1f;"></div>
<span class="t" style="left:1001.99px;top:1195.58px;font-size:24px;line-height:24px;color:#d2d2d2;-webkit-text-stroke:0.5px #d2d2d2;transform:scaleX(1.0078);">Normal</span>
<svg style="left:1158.80px;top:1204.00px" width="15.8" height="9.4" viewBox="0 0 15.8 9.4"><path d="M0.8 0.8L7.9 7.4L15.0 0.8" fill="none" stroke="#d0d0d0" stroke-width="2"/></svg>
<div style="left:1194.30px;top:1194.30px;width:25.70px;height:25.60px;background:#222222;"></div>
<svg style="left:1447.20px;top:1196.60px" width="24" height="22" viewBox="0 0 24 22"><path d="M11.5 11.5A3 3 0 1 1 14.5 14.5A6.4 6.4 0 1 1 19.5 5.5M3 8A10 10 0 1 0 12 1" fill="none" stroke="#b4b4b4" stroke-width="1.8"/></svg>
<div style="left:1484.00px;top:1194.30px;width:177.80px;height:27.00px;background:#1f1f1f;"></div>
<span class="t" style="left:1495.85px;top:1195.58px;font-size:24px;line-height:24px;color:#d2d2d2;-webkit-text-stroke:0.5px #d2d2d2;transform:scaleX(0.9478);">None</span>
<svg style="left:1636.90px;top:1204.00px" width="15.8" height="9.4" viewBox="0 0 15.8 9.4"><path d="M0.8 0.8L7.9 7.4L15.0 0.8" fill="none" stroke="#d0d0d0" stroke-width="2"/></svg>
<div style="left:1702.00px;top:1090.20px;width:2.20px;height:438.00px;background:#060606;"></div>
<div style="left:1705.20px;top:1112.00px;width:1163.00px;height:40.00px;background:#262626;"></div>
<div style="left:1705.20px;top:1153.00px;width:12.60px;height:375.00px;background:#292929;"></div>
<div style="left:1717.80px;top:1192.00px;width:1124.60px;height:336.00px;background:#353535;"></div>
<div style="left:2828.00px;top:1111.70px;width:16.00px;height:38.50px;background:#222222;"></div>
<div style="left:2842.40px;top:1226.00px;width:25.60px;height:302.00px;background:#232323;"></div>
<div style="left:2842.40px;top:1090.60px;width:2.00px;height:135.40px;background:#060606;"></div>
<div style="left:2842.40px;top:1189.80px;width:25.60px;height:2.20px;background:#060606;"></div>
<div style="left:1702.00px;top:1090.20px;width:1142.00px;height:21.50px;background:#0a0a0a;border-radius:2px 11px 0 2px;"></div>
<div style="left:2830.00px;top:1092.00px;width:12.40px;height:19.70px;background:#181818;border-radius:0 10px 0 0;"></div>
<div style="left:2090.00px;top:1092.10px;width:740.00px;height:19.60px;background:#3e3a35;"></div>
<div style="left:2098.00px;top:1092.10px;width:732.00px;height:1.60px;background:#5a4f40;"></div>
<div style="left:2098.00px;top:1110.10px;width:732.00px;height:1.60px;background:#5a4f40;"></div>
<div style="left:1716.80px;top:1092.60px;width:371.00px;height:18.40px;background:#6b6b6b;border:1.6px solid #0a0a0a;box-sizing:border-box;"></div>
<div style="left:1704.20px;top:1093.00px;width:12.40px;height:17.80px;background:#358fe8;border-radius:9px 0 0 9px;"></div>
<div style="left:2088.00px;top:1093.00px;width:12.00px;height:17.80px;background:#358fe8;border-radius:0 9px 9px 0;"></div>
<div style="left:1915.40px;top:1093.60px;width:1.40px;height:16.60px;background:#4ea0f0;"></div>
<div style="left:1917.60px;top:1093.60px;width:1.40px;height:16.60px;background:#b8b8b8;"></div>
<div style="left:1717.80px;top:1135.20px;width:1.80px;height:14.80px;background:#a0a0a0;"></div>
<span class="t" style="left:1698.00px;top:1116.62px;font-size:21px;line-height:21px;color:#a6a6a6;-webkit-text-stroke:0.5px #a6a6a6;transform:scaleX(1.0064);">0:00s</span>
<div style="left:1851.12px;top:1141.20px;width:1.80px;height:8.80px;background:#a0a0a0;"></div>
<span class="t" style="left:1833.82px;top:1116.62px;font-size:21px;line-height:21px;color:#a6a6a6;-webkit-text-stroke:0.5px #a6a6a6;transform:scaleX(0.9953);">01s</span>
<div style="left:1984.44px;top:1141.20px;width:1.80px;height:8.80px;background:#a0a0a0;"></div>
<span class="t" style="left:1967.14px;top:1116.62px;font-size:21px;line-height:21px;color:#a6a6a6;-webkit-text-stroke:0.5px #a6a6a6;transform:scaleX(0.9953);">02s</span>
<div style="left:2117.76px;top:1141.20px;width:1.80px;height:8.80px;background:#a0a0a0;"></div>
<span class="t" style="left:2100.46px;top:1116.62px;font-size:21px;line-height:21px;color:#a6a6a6;-webkit-text-stroke:0.5px #a6a6a6;transform:scaleX(0.9953);">03s</span>
<div style="left:2251.08px;top:1141.20px;width:1.80px;height:8.80px;background:#a0a0a0;"></div>
<span class="t" style="left:2233.78px;top:1116.62px;font-size:21px;line-height:21px;color:#a6a6a6;-webkit-text-stroke:0.5px #a6a6a6;transform:scaleX(0.9953);">04s</span>
<div style="left:2384.40px;top:1141.20px;width:1.80px;height:8.80px;background:#a0a0a0;"></div>
<span class="t" style="left:2367.10px;top:1116.62px;font-size:21px;line-height:21px;color:#a6a6a6;-webkit-text-stroke:0.5px #a6a6a6;transform:scaleX(0.9953);">05s</span>
<div style="left:2517.72px;top:1141.20px;width:1.80px;height:8.80px;background:#a0a0a0;"></div>
<span class="t" style="left:2500.42px;top:1116.62px;font-size:21px;line-height:21px;color:#a6a6a6;-webkit-text-stroke:0.5px #a6a6a6;transform:scaleX(0.9953);">06s</span>
<div style="left:2651.04px;top:1141.20px;width:1.80px;height:8.80px;background:#a0a0a0;"></div>
<span class="t" style="left:2633.74px;top:1116.62px;font-size:21px;line-height:21px;color:#a6a6a6;-webkit-text-stroke:0.5px #a6a6a6;transform:scaleX(0.9953);">07s</span>
<div style="left:2784.36px;top:1141.20px;width:1.80px;height:8.80px;background:#a0a0a0;"></div>
<span class="t" style="left:2767.06px;top:1116.62px;font-size:21px;line-height:21px;color:#a6a6a6;-webkit-text-stroke:0.5px #a6a6a6;transform:scaleX(0.9953);">08s</span>
<div style="left:1688.00px;top:1112.00px;width:14.00px;height:30.00px;background:#262626;"></div>
<div style="left:1702.00px;top:1112.00px;width:2.20px;height:30.00px;background:#060606;"></div>
<div style="left:1705.20px;top:1150.40px;width:1137.20px;height:2.60px;background:#090909;"></div>
<div style="left:1717.80px;top:1152.40px;width:1124.60px;height:29.60px;background:#5f5f5f;"></div>
<div style="left:1717.80px;top:1152.40px;width:1124.60px;height:1.60px;background:#787878;"></div>
<div style="left:1705.40px;top:1153.60px;width:11.40px;height:27.20px;background:#358fe8;border-radius:8px 0 0 8px;"></div>
<div style="left:1705.20px;top:1182.00px;width:1137.20px;height:2.20px;background:#060606;"></div>
<div style="left:1705.20px;top:1184.20px;width:1137.20px;height:5.60px;background:#282828;"></div>
<div style="left:1883.90px;top:1184.60px;width:12.00px;height:5.20px;background:#2ebd33;"></div>
<div style="left:1946.10px;top:1184.60px;width:21.70px;height:5.20px;background:#2ebd33;"></div>
<div style="left:1974.30px;top:1184.60px;width:3.70px;height:5.20px;background:#2ebd33;"></div>
<div style="left:2006.10px;top:1184.60px;width:45.70px;height:5.20px;background:#2ebd33;"></div>
<div style="left:2056.40px;top:1184.60px;width:5.50px;height:5.20px;background:#2ebd33;"></div>
<div style="left:2090.50px;top:1184.60px;width:5.50px;height:5.20px;background:#2ebd33;"></div>
<div style="left:2128.30px;top:1184.60px;width:5.60px;height:5.20px;background:#2ebd33;"></div>
<div style="left:2190.10px;top:1184.60px;width:5.60px;height:5.20px;background:#2ebd33;"></div>
<div style="left:2212.30px;top:1184.60px;width:5.50px;height:5.20px;background:#2ebd33;"></div>
<div style="left:2250.10px;top:1184.60px;width:5.50px;height:5.20px;background:#2ebd33;"></div>
<div style="left:2278.20px;top:1184.60px;width:39.70px;height:5.20px;background:#2ebd33;"></div>
<div style="left:2340.50px;top:1184.60px;width:5.50px;height:5.20px;background:#2ebd33;"></div>
<div style="left:2356.20px;top:1184.60px;width:5.50px;height:5.20px;background:#2ebd33;"></div>
<div style="left:2384.30px;top:1184.60px;width:11.60px;height:5.20px;background:#2ebd33;"></div>
<div style="left:2400.50px;top:1184.60px;width:11.50px;height:5.20px;background:#2ebd33;"></div>
<div style="left:1705.20px;top:1189.80px;width:1137.20px;height:2.20px;background:#060606;"></div>
<div style="left:1717.80px;top:1192.00px;width:1124.60px;height:32.20px;background:#736a5b;border-radius:10px 0 0 0;"></div>
<div style="left:1717.80px;top:1222.40px;width:1124.60px;height:1.80px;background:#5e574b;"></div>
<div style="left:1682.00px;top:1224.00px;width:21.00px;height:1.60px;background:#1c1c1c;"></div>
<svg style="left:2850.20px;top:1156.80px" width="18" height="28" viewBox="0 0 18 28"><path d="M0 0H18V20L9 27.5L0 20Z" fill="#b4b4b4"/></svg>
<svg style="left:2845.00px;top:1195.50px" width="23" height="28" viewBox="0 0 23 28"><path d="M1 17L15 2V22M1 17H15" fill="none" stroke="#b4b4b4" stroke-width="2"/><circle cx="16" cy="20" r="5.6" fill="#232323" stroke="#b4b4b4" stroke-width="2"/></svg>
<div style="left:2312.00px;top:1140.00px;width:1.80px;height:388.00px;background:#3b8fe6;"></div>
<svg style="left:2301.40px;top:1122.20px" width="23" height="27" viewBox="0 0 23 27"><path d="M0.5 0H22.5V12.5L11.5 26.5L0.5 12.5Z" fill="#3a96f0"/><path d="M7.5 13.5H15.5M11.5 13.5V26" stroke="#1a3c62" stroke-width="1.6"/></svg>
<div style="left:4.00px;top:1528.10px;width:1913.50px;height:2.30px;background:#050505;"></div>
<div style="left:2.20px;top:1530.40px;width:2868.00px;height:21.00px;background:#262626;"></div>
<div style="left:1917.50px;top:1527.60px;width:925.00px;height:24.00px;background:#1e1e1e;"></div>
<div style="left:2842.40px;top:1527.60px;width:25.60px;height:24.00px;background:#232323;"></div>
<div style="left:1919.90px;top:1530.40px;width:306.70px;height:30.00px;background:#2d2d2d;border-radius:11px;"></div>
<div style="left:10.20px;top:1530.40px;width:33.60px;height:24.00px;background:#262626;border:1.2px solid #2f2f2f;box-sizing:border-box;"></div>
<div style="left:46.20px;top:1530.40px;width:33.60px;height:24.00px;background:#262626;border:1.2px solid #2f2f2f;box-sizing:border-box;"></div>
<svg style="left:15.80px;top:1535.60px" width="23" height="15" viewBox="0 0 23 15"><rect x="1" y="1" width="14" height="13" fill="none" stroke="#3a96f0" stroke-width="2"/><rect x="6.5" y="5.5" width="15" height="13" fill="#262626" stroke="#3a96f0" stroke-width="2"/><rect x="11" y="10" width="6" height="6" fill="#3a96f0"/></svg>
<svg style="left:53.30px;top:1534.40px" width="22" height="17" viewBox="0 0 22 17"><circle cx="9" cy="9.5" r="8" fill="none" stroke="#3a96f0" stroke-width="2"/><rect x="11" y="9.5" width="10" height="9" fill="#262626" stroke="#3a96f0" stroke-width="2"/></svg>
<svg style="left:87.60px;top:1534.40px" width="23" height="17" viewBox="0 0 23 17"><path d="M5.5 0.8H17.5V5.5L22 10.5L17.5 15.5V17H5.5V15.5L1 10.5L5.5 5.5Z" fill="#6a6a6a" stroke="#b4b4b4" stroke-width="1.6"/></svg>
<svg style="left:1714.60px;top:1541.40px" width="20" height="10" viewBox="0 0 20 10"><path d="M0 10L9.5 0L14 5L15.5 3.5L20 10Z" fill="#b4b4b4"/></svg>
<div style="left:1765.30px;top:1543.60px;width:86.30px;height:3.40px;background:#4c4c4c;"></div>
<svg style="left:1814.70px;top:1537.40px" width="20" height="14" viewBox="0 0 20 14"><circle cx="10" cy="10" r="8.4" fill="#262626" stroke="#a8a8a8" stroke-width="2.8"/></svg>
<svg style="left:1876.00px;top:1535.50px" width="33" height="15" viewBox="0 0 33 15"><path d="M0 15L15.5 0L22.5 7.5L25 5L33 15Z" fill="#b4b4b4"/></svg>
</body></html>
